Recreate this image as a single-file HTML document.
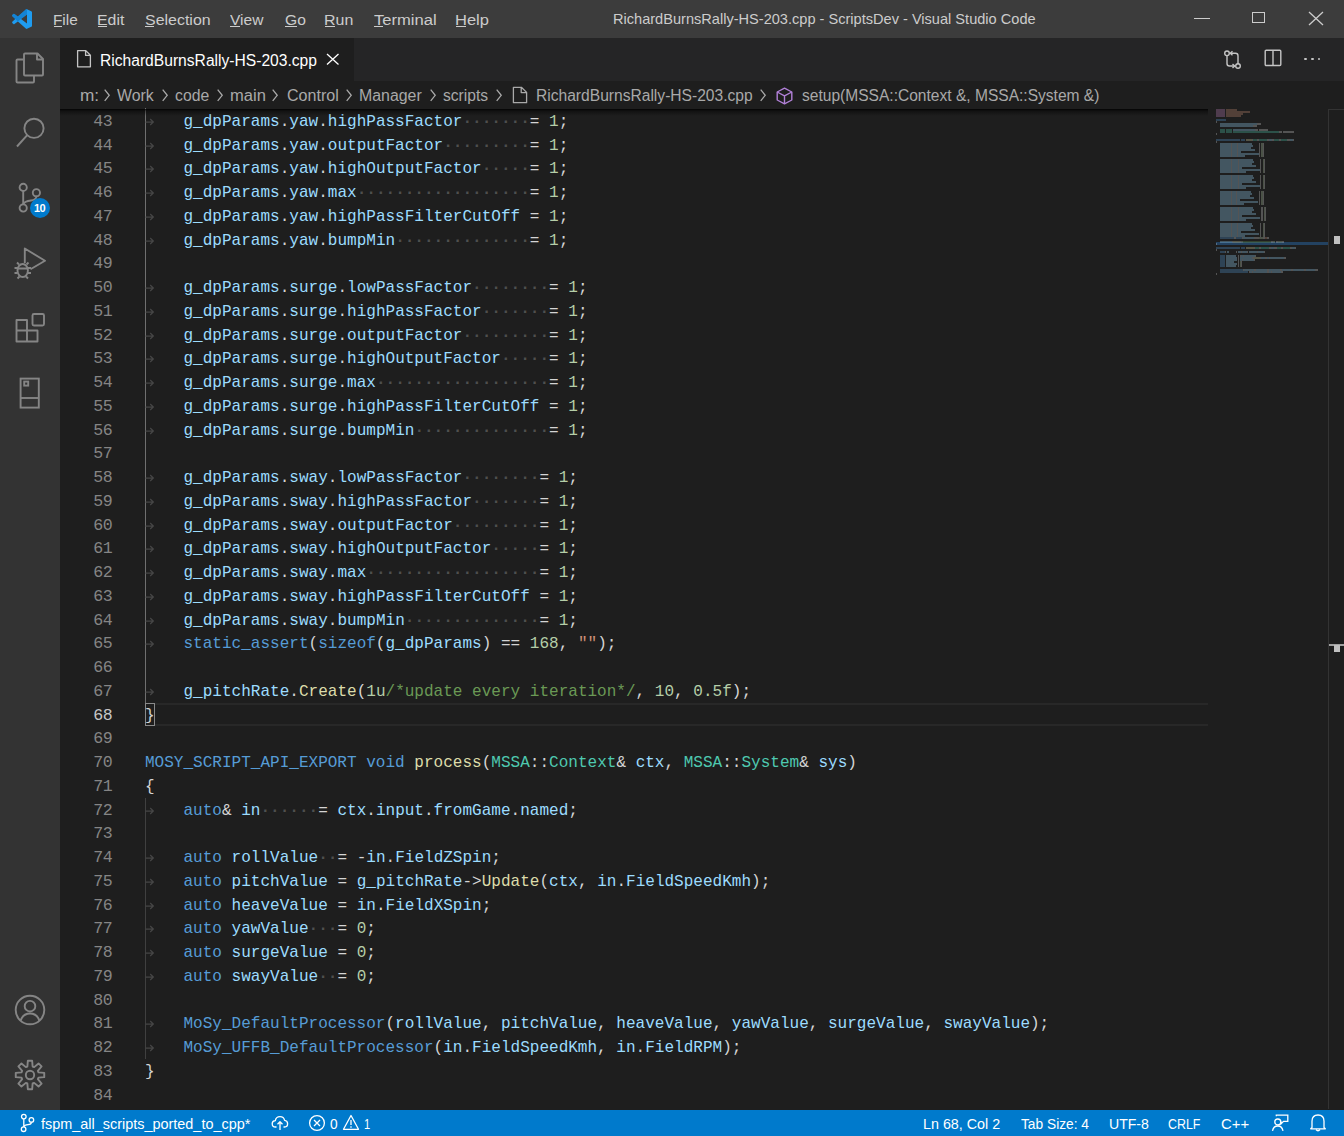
<!DOCTYPE html><html><head><meta charset="utf-8"><style>
*{margin:0;padding:0;box-sizing:border-box}
html,body{width:1344px;height:1136px;overflow:hidden;background:#1e1e1e}
body{position:relative;font-family:"Liberation Sans",sans-serif}
.abs{position:absolute}
svg.abs{overflow:visible}
#title{left:0;top:0;width:1344px;height:37.9px;background:#3c3c3c}
#act{left:0;top:37.5px;width:60px;height:1072px;background:#333333}
#tabs{left:60px;top:37.5px;width:1284px;height:43.75px;background:#252526}
#tab{left:60px;top:37.5px;width:294px;height:43.75px;background:#1e1e1e}
#status{left:0;top:1109.5px;width:1344px;height:26.5px;background:#007acc}
.ln{position:absolute;left:145.2px;height:23.75px;line-height:23.75px;font-family:"Liberation Mono",monospace;font-size:16.6px;white-space:pre;color:#d4d4d4;transform:scaleX(0.9659);transform-origin:0 0}
.num{position:absolute;left:60px;width:52.5px;text-align:right;height:23.75px;line-height:23.75px;font-family:"Liberation Mono",monospace;font-size:16.6px;white-space:pre;letter-spacing:-0.34px}
.ws{color:rgba(227,228,226,0.26);font-weight:bold}
.t{position:absolute;white-space:pre;transform-origin:0 0;font-family:"Liberation Sans",sans-serif}
</style></head><body>
<div id="title" class="abs"></div>
<div id="act" class="abs"></div>
<div id="tabs" class="abs"></div>
<div id="tab" class="abs"></div>
<div id="status" class="abs"></div>
<div class="abs" style="left:145px;top:702.80px;width:1063px;height:23.6px;border-top:2.5px solid #282828;border-bottom:2.5px solid #282828"></div>
<div class="abs" style="left:145px;top:108.25px;width:1.25px;height:594.75px;background:#707070"></div><div class="abs" style="left:145px;top:798.00px;width:1.25px;height:261.25px;background:#404040"></div>
<svg class="abs" style="left:145px;top:116.75px" width="11" height="10" viewBox="0 0 11 10"><path d="M0.5 5H8.3M5.2 2L8.3 5L5.2 8" fill="none" stroke="#464646" stroke-width="1.25"/></svg><svg class="abs" style="left:145px;top:140.5px" width="11" height="10" viewBox="0 0 11 10"><path d="M0.5 5H8.3M5.2 2L8.3 5L5.2 8" fill="none" stroke="#464646" stroke-width="1.25"/></svg><svg class="abs" style="left:145px;top:164.25px" width="11" height="10" viewBox="0 0 11 10"><path d="M0.5 5H8.3M5.2 2L8.3 5L5.2 8" fill="none" stroke="#464646" stroke-width="1.25"/></svg><svg class="abs" style="left:145px;top:188.0px" width="11" height="10" viewBox="0 0 11 10"><path d="M0.5 5H8.3M5.2 2L8.3 5L5.2 8" fill="none" stroke="#464646" stroke-width="1.25"/></svg><svg class="abs" style="left:145px;top:211.75px" width="11" height="10" viewBox="0 0 11 10"><path d="M0.5 5H8.3M5.2 2L8.3 5L5.2 8" fill="none" stroke="#464646" stroke-width="1.25"/></svg><svg class="abs" style="left:145px;top:235.5px" width="11" height="10" viewBox="0 0 11 10"><path d="M0.5 5H8.3M5.2 2L8.3 5L5.2 8" fill="none" stroke="#464646" stroke-width="1.25"/></svg><svg class="abs" style="left:145px;top:283.0px" width="11" height="10" viewBox="0 0 11 10"><path d="M0.5 5H8.3M5.2 2L8.3 5L5.2 8" fill="none" stroke="#464646" stroke-width="1.25"/></svg><svg class="abs" style="left:145px;top:306.75px" width="11" height="10" viewBox="0 0 11 10"><path d="M0.5 5H8.3M5.2 2L8.3 5L5.2 8" fill="none" stroke="#464646" stroke-width="1.25"/></svg><svg class="abs" style="left:145px;top:330.5px" width="11" height="10" viewBox="0 0 11 10"><path d="M0.5 5H8.3M5.2 2L8.3 5L5.2 8" fill="none" stroke="#464646" stroke-width="1.25"/></svg><svg class="abs" style="left:145px;top:354.25px" width="11" height="10" viewBox="0 0 11 10"><path d="M0.5 5H8.3M5.2 2L8.3 5L5.2 8" fill="none" stroke="#464646" stroke-width="1.25"/></svg><svg class="abs" style="left:145px;top:378.0px" width="11" height="10" viewBox="0 0 11 10"><path d="M0.5 5H8.3M5.2 2L8.3 5L5.2 8" fill="none" stroke="#464646" stroke-width="1.25"/></svg><svg class="abs" style="left:145px;top:401.75px" width="11" height="10" viewBox="0 0 11 10"><path d="M0.5 5H8.3M5.2 2L8.3 5L5.2 8" fill="none" stroke="#464646" stroke-width="1.25"/></svg><svg class="abs" style="left:145px;top:425.5px" width="11" height="10" viewBox="0 0 11 10"><path d="M0.5 5H8.3M5.2 2L8.3 5L5.2 8" fill="none" stroke="#464646" stroke-width="1.25"/></svg><svg class="abs" style="left:145px;top:473.0px" width="11" height="10" viewBox="0 0 11 10"><path d="M0.5 5H8.3M5.2 2L8.3 5L5.2 8" fill="none" stroke="#464646" stroke-width="1.25"/></svg><svg class="abs" style="left:145px;top:496.75px" width="11" height="10" viewBox="0 0 11 10"><path d="M0.5 5H8.3M5.2 2L8.3 5L5.2 8" fill="none" stroke="#464646" stroke-width="1.25"/></svg><svg class="abs" style="left:145px;top:520.5px" width="11" height="10" viewBox="0 0 11 10"><path d="M0.5 5H8.3M5.2 2L8.3 5L5.2 8" fill="none" stroke="#464646" stroke-width="1.25"/></svg><svg class="abs" style="left:145px;top:544.25px" width="11" height="10" viewBox="0 0 11 10"><path d="M0.5 5H8.3M5.2 2L8.3 5L5.2 8" fill="none" stroke="#464646" stroke-width="1.25"/></svg><svg class="abs" style="left:145px;top:568.0px" width="11" height="10" viewBox="0 0 11 10"><path d="M0.5 5H8.3M5.2 2L8.3 5L5.2 8" fill="none" stroke="#464646" stroke-width="1.25"/></svg><svg class="abs" style="left:145px;top:591.75px" width="11" height="10" viewBox="0 0 11 10"><path d="M0.5 5H8.3M5.2 2L8.3 5L5.2 8" fill="none" stroke="#464646" stroke-width="1.25"/></svg><svg class="abs" style="left:145px;top:615.5px" width="11" height="10" viewBox="0 0 11 10"><path d="M0.5 5H8.3M5.2 2L8.3 5L5.2 8" fill="none" stroke="#464646" stroke-width="1.25"/></svg><svg class="abs" style="left:145px;top:639.25px" width="11" height="10" viewBox="0 0 11 10"><path d="M0.5 5H8.3M5.2 2L8.3 5L5.2 8" fill="none" stroke="#464646" stroke-width="1.25"/></svg><svg class="abs" style="left:145px;top:686.75px" width="11" height="10" viewBox="0 0 11 10"><path d="M0.5 5H8.3M5.2 2L8.3 5L5.2 8" fill="none" stroke="#464646" stroke-width="1.25"/></svg><svg class="abs" style="left:145px;top:805.5px" width="11" height="10" viewBox="0 0 11 10"><path d="M0.5 5H8.3M5.2 2L8.3 5L5.2 8" fill="none" stroke="#464646" stroke-width="1.25"/></svg><svg class="abs" style="left:145px;top:853.0px" width="11" height="10" viewBox="0 0 11 10"><path d="M0.5 5H8.3M5.2 2L8.3 5L5.2 8" fill="none" stroke="#464646" stroke-width="1.25"/></svg><svg class="abs" style="left:145px;top:876.75px" width="11" height="10" viewBox="0 0 11 10"><path d="M0.5 5H8.3M5.2 2L8.3 5L5.2 8" fill="none" stroke="#464646" stroke-width="1.25"/></svg><svg class="abs" style="left:145px;top:900.5px" width="11" height="10" viewBox="0 0 11 10"><path d="M0.5 5H8.3M5.2 2L8.3 5L5.2 8" fill="none" stroke="#464646" stroke-width="1.25"/></svg><svg class="abs" style="left:145px;top:924.25px" width="11" height="10" viewBox="0 0 11 10"><path d="M0.5 5H8.3M5.2 2L8.3 5L5.2 8" fill="none" stroke="#464646" stroke-width="1.25"/></svg><svg class="abs" style="left:145px;top:948.0px" width="11" height="10" viewBox="0 0 11 10"><path d="M0.5 5H8.3M5.2 2L8.3 5L5.2 8" fill="none" stroke="#464646" stroke-width="1.25"/></svg><svg class="abs" style="left:145px;top:971.75px" width="11" height="10" viewBox="0 0 11 10"><path d="M0.5 5H8.3M5.2 2L8.3 5L5.2 8" fill="none" stroke="#464646" stroke-width="1.25"/></svg><svg class="abs" style="left:145px;top:1019.25px" width="11" height="10" viewBox="0 0 11 10"><path d="M0.5 5H8.3M5.2 2L8.3 5L5.2 8" fill="none" stroke="#464646" stroke-width="1.25"/></svg><svg class="abs" style="left:145px;top:1043.0px" width="11" height="10" viewBox="0 0 11 10"><path d="M0.5 5H8.3M5.2 2L8.3 5L5.2 8" fill="none" stroke="#464646" stroke-width="1.25"/></svg>
<div class="abs" style="left:145px;top:702.90px;width:10px;height:23.2px;border:1.2px solid #8a8a8a;background:#1e1e1e"></div>
<div class="ln" style="top:109.80px">    <span style="color:#9cdcfe">g_dpParams</span><span style="color:#d4d4d4">.</span><span style="color:#9cdcfe">yaw</span><span style="color:#d4d4d4">.</span><span style="color:#9cdcfe">highPassFactor</span><span class="ws">·······</span><span style="color:#d4d4d4">= </span><span style="color:#b5cea8">1</span><span style="color:#d4d4d4">;</span></div>
<div class="num" style="top:109.80px;color:#858585">43</div>
<div class="ln" style="top:133.55px">    <span style="color:#9cdcfe">g_dpParams</span><span style="color:#d4d4d4">.</span><span style="color:#9cdcfe">yaw</span><span style="color:#d4d4d4">.</span><span style="color:#9cdcfe">outputFactor</span><span class="ws">·········</span><span style="color:#d4d4d4">= </span><span style="color:#b5cea8">1</span><span style="color:#d4d4d4">;</span></div>
<div class="num" style="top:133.55px;color:#858585">44</div>
<div class="ln" style="top:157.30px">    <span style="color:#9cdcfe">g_dpParams</span><span style="color:#d4d4d4">.</span><span style="color:#9cdcfe">yaw</span><span style="color:#d4d4d4">.</span><span style="color:#9cdcfe">highOutputFactor</span><span class="ws">·····</span><span style="color:#d4d4d4">= </span><span style="color:#b5cea8">1</span><span style="color:#d4d4d4">;</span></div>
<div class="num" style="top:157.30px;color:#858585">45</div>
<div class="ln" style="top:181.05px">    <span style="color:#9cdcfe">g_dpParams</span><span style="color:#d4d4d4">.</span><span style="color:#9cdcfe">yaw</span><span style="color:#d4d4d4">.</span><span style="color:#9cdcfe">max</span><span class="ws">··················</span><span style="color:#d4d4d4">= </span><span style="color:#b5cea8">1</span><span style="color:#d4d4d4">;</span></div>
<div class="num" style="top:181.05px;color:#858585">46</div>
<div class="ln" style="top:204.80px">    <span style="color:#9cdcfe">g_dpParams</span><span style="color:#d4d4d4">.</span><span style="color:#9cdcfe">yaw</span><span style="color:#d4d4d4">.</span><span style="color:#9cdcfe">highPassFilterCutOff</span> <span style="color:#d4d4d4">= </span><span style="color:#b5cea8">1</span><span style="color:#d4d4d4">;</span></div>
<div class="num" style="top:204.80px;color:#858585">47</div>
<div class="ln" style="top:228.55px">    <span style="color:#9cdcfe">g_dpParams</span><span style="color:#d4d4d4">.</span><span style="color:#9cdcfe">yaw</span><span style="color:#d4d4d4">.</span><span style="color:#9cdcfe">bumpMin</span><span class="ws">··············</span><span style="color:#d4d4d4">= </span><span style="color:#b5cea8">1</span><span style="color:#d4d4d4">;</span></div>
<div class="num" style="top:228.55px;color:#858585">48</div>
<div class="ln" style="top:252.30px"></div>
<div class="num" style="top:252.30px;color:#858585">49</div>
<div class="ln" style="top:276.05px">    <span style="color:#9cdcfe">g_dpParams</span><span style="color:#d4d4d4">.</span><span style="color:#9cdcfe">surge</span><span style="color:#d4d4d4">.</span><span style="color:#9cdcfe">lowPassFactor</span><span class="ws">········</span><span style="color:#d4d4d4">= </span><span style="color:#b5cea8">1</span><span style="color:#d4d4d4">;</span></div>
<div class="num" style="top:276.05px;color:#858585">50</div>
<div class="ln" style="top:299.80px">    <span style="color:#9cdcfe">g_dpParams</span><span style="color:#d4d4d4">.</span><span style="color:#9cdcfe">surge</span><span style="color:#d4d4d4">.</span><span style="color:#9cdcfe">highPassFactor</span><span class="ws">·······</span><span style="color:#d4d4d4">= </span><span style="color:#b5cea8">1</span><span style="color:#d4d4d4">;</span></div>
<div class="num" style="top:299.80px;color:#858585">51</div>
<div class="ln" style="top:323.55px">    <span style="color:#9cdcfe">g_dpParams</span><span style="color:#d4d4d4">.</span><span style="color:#9cdcfe">surge</span><span style="color:#d4d4d4">.</span><span style="color:#9cdcfe">outputFactor</span><span class="ws">·········</span><span style="color:#d4d4d4">= </span><span style="color:#b5cea8">1</span><span style="color:#d4d4d4">;</span></div>
<div class="num" style="top:323.55px;color:#858585">52</div>
<div class="ln" style="top:347.30px">    <span style="color:#9cdcfe">g_dpParams</span><span style="color:#d4d4d4">.</span><span style="color:#9cdcfe">surge</span><span style="color:#d4d4d4">.</span><span style="color:#9cdcfe">highOutputFactor</span><span class="ws">·····</span><span style="color:#d4d4d4">= </span><span style="color:#b5cea8">1</span><span style="color:#d4d4d4">;</span></div>
<div class="num" style="top:347.30px;color:#858585">53</div>
<div class="ln" style="top:371.05px">    <span style="color:#9cdcfe">g_dpParams</span><span style="color:#d4d4d4">.</span><span style="color:#9cdcfe">surge</span><span style="color:#d4d4d4">.</span><span style="color:#9cdcfe">max</span><span class="ws">··················</span><span style="color:#d4d4d4">= </span><span style="color:#b5cea8">1</span><span style="color:#d4d4d4">;</span></div>
<div class="num" style="top:371.05px;color:#858585">54</div>
<div class="ln" style="top:394.80px">    <span style="color:#9cdcfe">g_dpParams</span><span style="color:#d4d4d4">.</span><span style="color:#9cdcfe">surge</span><span style="color:#d4d4d4">.</span><span style="color:#9cdcfe">highPassFilterCutOff</span> <span style="color:#d4d4d4">= </span><span style="color:#b5cea8">1</span><span style="color:#d4d4d4">;</span></div>
<div class="num" style="top:394.80px;color:#858585">55</div>
<div class="ln" style="top:418.55px">    <span style="color:#9cdcfe">g_dpParams</span><span style="color:#d4d4d4">.</span><span style="color:#9cdcfe">surge</span><span style="color:#d4d4d4">.</span><span style="color:#9cdcfe">bumpMin</span><span class="ws">··············</span><span style="color:#d4d4d4">= </span><span style="color:#b5cea8">1</span><span style="color:#d4d4d4">;</span></div>
<div class="num" style="top:418.55px;color:#858585">56</div>
<div class="ln" style="top:442.30px"></div>
<div class="num" style="top:442.30px;color:#858585">57</div>
<div class="ln" style="top:466.05px">    <span style="color:#9cdcfe">g_dpParams</span><span style="color:#d4d4d4">.</span><span style="color:#9cdcfe">sway</span><span style="color:#d4d4d4">.</span><span style="color:#9cdcfe">lowPassFactor</span><span class="ws">········</span><span style="color:#d4d4d4">= </span><span style="color:#b5cea8">1</span><span style="color:#d4d4d4">;</span></div>
<div class="num" style="top:466.05px;color:#858585">58</div>
<div class="ln" style="top:489.80px">    <span style="color:#9cdcfe">g_dpParams</span><span style="color:#d4d4d4">.</span><span style="color:#9cdcfe">sway</span><span style="color:#d4d4d4">.</span><span style="color:#9cdcfe">highPassFactor</span><span class="ws">·······</span><span style="color:#d4d4d4">= </span><span style="color:#b5cea8">1</span><span style="color:#d4d4d4">;</span></div>
<div class="num" style="top:489.80px;color:#858585">59</div>
<div class="ln" style="top:513.55px">    <span style="color:#9cdcfe">g_dpParams</span><span style="color:#d4d4d4">.</span><span style="color:#9cdcfe">sway</span><span style="color:#d4d4d4">.</span><span style="color:#9cdcfe">outputFactor</span><span class="ws">·········</span><span style="color:#d4d4d4">= </span><span style="color:#b5cea8">1</span><span style="color:#d4d4d4">;</span></div>
<div class="num" style="top:513.55px;color:#858585">60</div>
<div class="ln" style="top:537.30px">    <span style="color:#9cdcfe">g_dpParams</span><span style="color:#d4d4d4">.</span><span style="color:#9cdcfe">sway</span><span style="color:#d4d4d4">.</span><span style="color:#9cdcfe">highOutputFactor</span><span class="ws">·····</span><span style="color:#d4d4d4">= </span><span style="color:#b5cea8">1</span><span style="color:#d4d4d4">;</span></div>
<div class="num" style="top:537.30px;color:#858585">61</div>
<div class="ln" style="top:561.05px">    <span style="color:#9cdcfe">g_dpParams</span><span style="color:#d4d4d4">.</span><span style="color:#9cdcfe">sway</span><span style="color:#d4d4d4">.</span><span style="color:#9cdcfe">max</span><span class="ws">··················</span><span style="color:#d4d4d4">= </span><span style="color:#b5cea8">1</span><span style="color:#d4d4d4">;</span></div>
<div class="num" style="top:561.05px;color:#858585">62</div>
<div class="ln" style="top:584.80px">    <span style="color:#9cdcfe">g_dpParams</span><span style="color:#d4d4d4">.</span><span style="color:#9cdcfe">sway</span><span style="color:#d4d4d4">.</span><span style="color:#9cdcfe">highPassFilterCutOff</span> <span style="color:#d4d4d4">= </span><span style="color:#b5cea8">1</span><span style="color:#d4d4d4">;</span></div>
<div class="num" style="top:584.80px;color:#858585">63</div>
<div class="ln" style="top:608.55px">    <span style="color:#9cdcfe">g_dpParams</span><span style="color:#d4d4d4">.</span><span style="color:#9cdcfe">sway</span><span style="color:#d4d4d4">.</span><span style="color:#9cdcfe">bumpMin</span><span class="ws">··············</span><span style="color:#d4d4d4">= </span><span style="color:#b5cea8">1</span><span style="color:#d4d4d4">;</span></div>
<div class="num" style="top:608.55px;color:#858585">64</div>
<div class="ln" style="top:632.30px">    <span style="color:#569cd6">static_assert</span><span style="color:#d4d4d4">(</span><span style="color:#569cd6">sizeof</span><span style="color:#d4d4d4">(</span><span style="color:#9cdcfe">g_dpParams</span><span style="color:#d4d4d4">) == </span><span style="color:#b5cea8">168</span><span style="color:#d4d4d4">, </span><span style="color:#ce9178">&quot;&quot;</span><span style="color:#d4d4d4">);</span></div>
<div class="num" style="top:632.30px;color:#858585">65</div>
<div class="ln" style="top:656.05px"></div>
<div class="num" style="top:656.05px;color:#858585">66</div>
<div class="ln" style="top:679.80px">    <span style="color:#9cdcfe">g_pitchRate</span><span style="color:#d4d4d4">.</span><span style="color:#dcdcaa">Create</span><span style="color:#d4d4d4">(</span><span style="color:#b5cea8">1u</span><span style="color:#6a9955">/*update every iteration*/</span><span style="color:#d4d4d4">, </span><span style="color:#b5cea8">10</span><span style="color:#d4d4d4">, </span><span style="color:#b5cea8">0.5f</span><span style="color:#d4d4d4">);</span></div>
<div class="num" style="top:679.80px;color:#858585">67</div>
<div class="ln" style="top:703.55px"><span class="bm" style="color:#d4d4d4">}</span></div>
<div class="num" style="top:703.55px;color:#c6c6c6">68</div>
<div class="ln" style="top:727.30px"></div>
<div class="num" style="top:727.30px;color:#858585">69</div>
<div class="ln" style="top:751.05px"><span style="color:#569cd6">MOSY_SCRIPT_API_EXPORT</span><span style="color:#d4d4d4"> </span><span style="color:#569cd6">void</span><span style="color:#d4d4d4"> </span><span style="color:#dcdcaa">process</span><span style="color:#d4d4d4">(</span><span style="color:#4ec9b0">MSSA</span><span style="color:#d4d4d4">::</span><span style="color:#4ec9b0">Context</span><span style="color:#d4d4d4">&amp; </span><span style="color:#9cdcfe">ctx</span><span style="color:#d4d4d4">, </span><span style="color:#4ec9b0">MSSA</span><span style="color:#d4d4d4">::</span><span style="color:#4ec9b0">System</span><span style="color:#d4d4d4">&amp; </span><span style="color:#9cdcfe">sys</span><span style="color:#d4d4d4">)</span></div>
<div class="num" style="top:751.05px;color:#858585">70</div>
<div class="ln" style="top:774.80px"><span style="color:#d4d4d4">{</span></div>
<div class="num" style="top:774.80px;color:#858585">71</div>
<div class="ln" style="top:798.55px">    <span style="color:#569cd6">auto</span><span style="color:#d4d4d4">&amp; </span><span style="color:#9cdcfe">in</span><span class="ws">······</span><span style="color:#d4d4d4">= </span><span style="color:#9cdcfe">ctx</span><span style="color:#d4d4d4">.</span><span style="color:#9cdcfe">input</span><span style="color:#d4d4d4">.</span><span style="color:#9cdcfe">fromGame</span><span style="color:#d4d4d4">.</span><span style="color:#9cdcfe">named</span><span style="color:#d4d4d4">;</span></div>
<div class="num" style="top:798.55px;color:#858585">72</div>
<div class="ln" style="top:822.30px"></div>
<div class="num" style="top:822.30px;color:#858585">73</div>
<div class="ln" style="top:846.05px">    <span style="color:#569cd6">auto</span><span style="color:#d4d4d4"> </span><span style="color:#9cdcfe">rollValue</span><span class="ws">··</span><span style="color:#d4d4d4">= </span><span style="color:#d4d4d4">-</span><span style="color:#9cdcfe">in</span><span style="color:#d4d4d4">.</span><span style="color:#9cdcfe">FieldZSpin</span><span style="color:#d4d4d4">;</span></div>
<div class="num" style="top:846.05px;color:#858585">74</div>
<div class="ln" style="top:869.80px">    <span style="color:#569cd6">auto</span><span style="color:#d4d4d4"> </span><span style="color:#9cdcfe">pitchValue</span><span style="color:#d4d4d4"> </span><span style="color:#d4d4d4">= </span><span style="color:#9cdcfe">g_pitchRate</span><span style="color:#d4d4d4">-&gt;</span><span style="color:#dcdcaa">Update</span><span style="color:#d4d4d4">(</span><span style="color:#9cdcfe">ctx</span><span style="color:#d4d4d4">, </span><span style="color:#9cdcfe">in</span><span style="color:#d4d4d4">.</span><span style="color:#9cdcfe">FieldSpeedKmh</span><span style="color:#d4d4d4">);</span></div>
<div class="num" style="top:869.80px;color:#858585">75</div>
<div class="ln" style="top:893.55px">    <span style="color:#569cd6">auto</span><span style="color:#d4d4d4"> </span><span style="color:#9cdcfe">heaveValue</span><span style="color:#d4d4d4"> </span><span style="color:#d4d4d4">= </span><span style="color:#9cdcfe">in</span><span style="color:#d4d4d4">.</span><span style="color:#9cdcfe">FieldXSpin</span><span style="color:#d4d4d4">;</span></div>
<div class="num" style="top:893.55px;color:#858585">76</div>
<div class="ln" style="top:917.30px">    <span style="color:#569cd6">auto</span><span style="color:#d4d4d4"> </span><span style="color:#9cdcfe">yawValue</span><span class="ws">···</span><span style="color:#d4d4d4">= </span><span style="color:#b5cea8">0</span><span style="color:#d4d4d4">;</span></div>
<div class="num" style="top:917.30px;color:#858585">77</div>
<div class="ln" style="top:941.05px">    <span style="color:#569cd6">auto</span><span style="color:#d4d4d4"> </span><span style="color:#9cdcfe">surgeValue</span><span style="color:#d4d4d4"> </span><span style="color:#d4d4d4">= </span><span style="color:#b5cea8">0</span><span style="color:#d4d4d4">;</span></div>
<div class="num" style="top:941.05px;color:#858585">78</div>
<div class="ln" style="top:964.80px">    <span style="color:#569cd6">auto</span><span style="color:#d4d4d4"> </span><span style="color:#9cdcfe">swayValue</span><span class="ws">··</span><span style="color:#d4d4d4">= </span><span style="color:#b5cea8">0</span><span style="color:#d4d4d4">;</span></div>
<div class="num" style="top:964.80px;color:#858585">79</div>
<div class="ln" style="top:988.55px"></div>
<div class="num" style="top:988.55px;color:#858585">80</div>
<div class="ln" style="top:1012.30px">    <span style="color:#569cd6">MoSy_DefaultProcessor</span><span style="color:#d4d4d4">(</span><span style="color:#9cdcfe">rollValue</span><span style="color:#d4d4d4">, </span><span style="color:#9cdcfe">pitchValue</span><span style="color:#d4d4d4">, </span><span style="color:#9cdcfe">heaveValue</span><span style="color:#d4d4d4">, </span><span style="color:#9cdcfe">yawValue</span><span style="color:#d4d4d4">, </span><span style="color:#9cdcfe">surgeValue</span><span style="color:#d4d4d4">, </span><span style="color:#9cdcfe">swayValue</span><span style="color:#d4d4d4">);</span></div>
<div class="num" style="top:1012.30px;color:#858585">81</div>
<div class="ln" style="top:1036.05px">    <span style="color:#569cd6">MoSy_UFFB_DefaultProcessor</span><span style="color:#d4d4d4">(</span><span style="color:#9cdcfe">in</span><span style="color:#d4d4d4">.</span><span style="color:#9cdcfe">FieldSpeedKmh</span><span style="color:#d4d4d4">, </span><span style="color:#9cdcfe">in</span><span style="color:#d4d4d4">.</span><span style="color:#9cdcfe">FieldRPM</span><span style="color:#d4d4d4">);</span></div>
<div class="num" style="top:1036.05px;color:#858585">82</div>
<div class="ln" style="top:1059.80px"><span style="color:#d4d4d4">}</span></div>
<div class="num" style="top:1059.80px;color:#858585">83</div>
<div class="ln" style="top:1083.55px"></div>
<div class="num" style="top:1083.55px;color:#858585">84</div>
<div class="abs" style="left:60px;top:108.5px;width:1148px;height:7px;background:linear-gradient(rgba(0,0,0,0.9) 0%,rgba(0,0,0,0.4) 30%,rgba(0,0,0,0) 100%)"></div>
<div class="abs" style="left:1328px;top:108.75px;width:1.25px;height:1000px;background:#333333"></div><div class="abs" style="left:1328px;top:108.5px;width:16px;height:1.25px;background:#333333"></div><div class="abs" style="left:1333.8px;top:236px;width:6.3px;height:8px;background:#c0c0c0"></div><div class="abs" style="left:1329px;top:643.5px;width:15px;height:2px;background:#a0a0a0"></div><div class="abs" style="left:1334px;top:645px;width:6px;height:7px;background:#c0c0c0"></div>
<div class="abs" style="left:1216.1px;top:242.40px;width:111.9px;height:2.4px;background:#264f78;opacity:0.75"></div><div class="abs" style="left:1216.10px;top:108.80px;width:8.64px;height:1.8px;background:#c586c0;opacity:0.3"></div><div class="abs" style="left:1225.82px;top:108.80px;width:10.80px;height:1.8px;background:#ce9178;opacity:0.3"></div><div class="abs" style="left:1216.10px;top:110.80px;width:8.64px;height:1.8px;background:#c586c0;opacity:0.3"></div><div class="abs" style="left:1225.82px;top:110.80px;width:23.76px;height:1.8px;background:#ce9178;opacity:0.3"></div><div class="abs" style="left:1216.10px;top:112.80px;width:8.64px;height:1.8px;background:#c586c0;opacity:0.3"></div><div class="abs" style="left:1225.82px;top:112.80px;width:17.28px;height:1.8px;background:#ce9178;opacity:0.3"></div><div class="abs" style="left:1216.10px;top:114.80px;width:8.64px;height:1.8px;background:#c586c0;opacity:0.3"></div><div class="abs" style="left:1225.82px;top:114.80px;width:15.12px;height:1.8px;background:#ce9178;opacity:0.3"></div><div class="abs" style="left:1216.10px;top:118.80px;width:9.72px;height:1.8px;background:#569cd6;opacity:0.3"></div><div class="abs" style="left:1216.10px;top:120.80px;width:1.08px;height:1.8px;background:#d4d4d4;opacity:0.3"></div><div class="abs" style="left:1220.42px;top:122.80px;width:36.72px;height:1.8px;background:#9cdcfe;opacity:0.3"></div><div class="abs" style="left:1257.14px;top:122.80px;width:4.32px;height:1.8px;background:#d4d4d4;opacity:0.3"></div><div class="abs" style="left:1220.42px;top:124.80px;width:32.40px;height:1.8px;background:#9cdcfe;opacity:0.3"></div><div class="abs" style="left:1252.82px;top:124.80px;width:4.32px;height:1.8px;background:#d4d4d4;opacity:0.3"></div><div class="abs" style="left:1220.42px;top:128.80px;width:4.32px;height:1.8px;background:#4ec9b0;opacity:0.3"></div><div class="abs" style="left:1225.82px;top:128.80px;width:6.48px;height:1.8px;background:#4ec9b0;opacity:0.3"></div><div class="abs" style="left:1233.38px;top:128.80px;width:21.60px;height:1.8px;background:#9cdcfe;opacity:0.3"></div><div class="abs" style="left:1254.98px;top:128.80px;width:3.24px;height:1.8px;background:#d4d4d4;opacity:0.3"></div><div class="abs" style="left:1259.30px;top:128.80px;width:8.64px;height:1.8px;background:#d4d4d4;opacity:0.3"></div><div class="abs" style="left:1220.42px;top:130.80px;width:4.32px;height:1.8px;background:#4ec9b0;opacity:0.3"></div><div class="abs" style="left:1225.82px;top:130.80px;width:6.48px;height:1.8px;background:#4ec9b0;opacity:0.3"></div><div class="abs" style="left:1233.38px;top:130.80px;width:45.36px;height:1.8px;background:#4ec9b0;opacity:0.3"></div><div class="abs" style="left:1278.74px;top:130.80px;width:3.24px;height:1.8px;background:#d4d4d4;opacity:0.3"></div><div class="abs" style="left:1283.06px;top:130.80px;width:10.80px;height:1.8px;background:#d4d4d4;opacity:0.3"></div><div class="abs" style="left:1216.10px;top:132.80px;width:1.08px;height:1.8px;background:#d4d4d4;opacity:0.3"></div><div class="abs" style="left:1216.10px;top:138.80px;width:23.76px;height:1.8px;background:#569cd6;opacity:0.3"></div><div class="abs" style="left:1240.94px;top:138.80px;width:4.32px;height:1.8px;background:#569cd6;opacity:0.3"></div><div class="abs" style="left:1246.34px;top:138.80px;width:5.40px;height:1.8px;background:#dcdcaa;opacity:0.3"></div><div class="abs" style="left:1251.74px;top:138.80px;width:1.08px;height:1.8px;background:#d4d4d4;opacity:0.3"></div><div class="abs" style="left:1252.82px;top:138.80px;width:4.32px;height:1.8px;background:#4ec9b0;opacity:0.3"></div><div class="abs" style="left:1257.14px;top:138.80px;width:2.16px;height:1.8px;background:#d4d4d4;opacity:0.3"></div><div class="abs" style="left:1259.30px;top:138.80px;width:7.56px;height:1.8px;background:#4ec9b0;opacity:0.3"></div><div class="abs" style="left:1266.86px;top:138.80px;width:2.16px;height:1.8px;background:#d4d4d4;opacity:0.3"></div><div class="abs" style="left:1269.02px;top:138.80px;width:3.24px;height:1.8px;background:#9cdcfe;opacity:0.3"></div><div class="abs" style="left:1272.26px;top:138.80px;width:2.16px;height:1.8px;background:#d4d4d4;opacity:0.3"></div><div class="abs" style="left:1274.42px;top:138.80px;width:4.32px;height:1.8px;background:#4ec9b0;opacity:0.3"></div><div class="abs" style="left:1278.74px;top:138.80px;width:2.16px;height:1.8px;background:#d4d4d4;opacity:0.3"></div><div class="abs" style="left:1280.90px;top:138.80px;width:6.48px;height:1.8px;background:#4ec9b0;opacity:0.3"></div><div class="abs" style="left:1287.38px;top:138.80px;width:2.16px;height:1.8px;background:#d4d4d4;opacity:0.3"></div><div class="abs" style="left:1289.54px;top:138.80px;width:3.24px;height:1.8px;background:#9cdcfe;opacity:0.3"></div><div class="abs" style="left:1292.78px;top:138.80px;width:1.08px;height:1.8px;background:#d4d4d4;opacity:0.3"></div><div class="abs" style="left:1216.10px;top:140.80px;width:1.08px;height:1.8px;background:#d4d4d4;opacity:0.3"></div><div class="abs" style="left:1220.42px;top:142.80px;width:10.80px;height:1.8px;background:#9cdcfe;opacity:0.3"></div><div class="abs" style="left:1231.22px;top:142.80px;width:1.08px;height:1.8px;background:#d4d4d4;opacity:0.3"></div><div class="abs" style="left:1232.30px;top:142.80px;width:4.32px;height:1.8px;background:#9cdcfe;opacity:0.3"></div><div class="abs" style="left:1236.62px;top:142.80px;width:1.08px;height:1.8px;background:#d4d4d4;opacity:0.3"></div><div class="abs" style="left:1237.70px;top:142.80px;width:14.04px;height:1.8px;background:#9cdcfe;opacity:0.3"></div><div class="abs" style="left:1259.30px;top:142.80px;width:1.08px;height:1.8px;background:#d4d4d4;opacity:0.3"></div><div class="abs" style="left:1261.46px;top:142.80px;width:1.08px;height:1.8px;background:#b5cea8;opacity:0.3"></div><div class="abs" style="left:1262.54px;top:142.80px;width:1.08px;height:1.8px;background:#d4d4d4;opacity:0.3"></div><div class="abs" style="left:1220.42px;top:144.80px;width:10.80px;height:1.8px;background:#9cdcfe;opacity:0.3"></div><div class="abs" style="left:1231.22px;top:144.80px;width:1.08px;height:1.8px;background:#d4d4d4;opacity:0.3"></div><div class="abs" style="left:1232.30px;top:144.80px;width:4.32px;height:1.8px;background:#9cdcfe;opacity:0.3"></div><div class="abs" style="left:1236.62px;top:144.80px;width:1.08px;height:1.8px;background:#d4d4d4;opacity:0.3"></div><div class="abs" style="left:1237.70px;top:144.80px;width:15.12px;height:1.8px;background:#9cdcfe;opacity:0.3"></div><div class="abs" style="left:1259.30px;top:144.80px;width:1.08px;height:1.8px;background:#d4d4d4;opacity:0.3"></div><div class="abs" style="left:1261.46px;top:144.80px;width:1.08px;height:1.8px;background:#b5cea8;opacity:0.3"></div><div class="abs" style="left:1262.54px;top:144.80px;width:1.08px;height:1.8px;background:#d4d4d4;opacity:0.3"></div><div class="abs" style="left:1220.42px;top:146.80px;width:10.80px;height:1.8px;background:#9cdcfe;opacity:0.3"></div><div class="abs" style="left:1231.22px;top:146.80px;width:1.08px;height:1.8px;background:#d4d4d4;opacity:0.3"></div><div class="abs" style="left:1232.30px;top:146.80px;width:4.32px;height:1.8px;background:#9cdcfe;opacity:0.3"></div><div class="abs" style="left:1236.62px;top:146.80px;width:1.08px;height:1.8px;background:#d4d4d4;opacity:0.3"></div><div class="abs" style="left:1237.70px;top:146.80px;width:12.96px;height:1.8px;background:#9cdcfe;opacity:0.3"></div><div class="abs" style="left:1259.30px;top:146.80px;width:1.08px;height:1.8px;background:#d4d4d4;opacity:0.3"></div><div class="abs" style="left:1261.46px;top:146.80px;width:1.08px;height:1.8px;background:#b5cea8;opacity:0.3"></div><div class="abs" style="left:1262.54px;top:146.80px;width:1.08px;height:1.8px;background:#d4d4d4;opacity:0.3"></div><div class="abs" style="left:1220.42px;top:148.80px;width:10.80px;height:1.8px;background:#9cdcfe;opacity:0.3"></div><div class="abs" style="left:1231.22px;top:148.80px;width:1.08px;height:1.8px;background:#d4d4d4;opacity:0.3"></div><div class="abs" style="left:1232.30px;top:148.80px;width:4.32px;height:1.8px;background:#9cdcfe;opacity:0.3"></div><div class="abs" style="left:1236.62px;top:148.80px;width:1.08px;height:1.8px;background:#d4d4d4;opacity:0.3"></div><div class="abs" style="left:1237.70px;top:148.80px;width:17.28px;height:1.8px;background:#9cdcfe;opacity:0.3"></div><div class="abs" style="left:1259.30px;top:148.80px;width:1.08px;height:1.8px;background:#d4d4d4;opacity:0.3"></div><div class="abs" style="left:1261.46px;top:148.80px;width:1.08px;height:1.8px;background:#b5cea8;opacity:0.3"></div><div class="abs" style="left:1262.54px;top:148.80px;width:1.08px;height:1.8px;background:#d4d4d4;opacity:0.3"></div><div class="abs" style="left:1220.42px;top:150.80px;width:10.80px;height:1.8px;background:#9cdcfe;opacity:0.3"></div><div class="abs" style="left:1231.22px;top:150.80px;width:1.08px;height:1.8px;background:#d4d4d4;opacity:0.3"></div><div class="abs" style="left:1232.30px;top:150.80px;width:4.32px;height:1.8px;background:#9cdcfe;opacity:0.3"></div><div class="abs" style="left:1236.62px;top:150.80px;width:1.08px;height:1.8px;background:#d4d4d4;opacity:0.3"></div><div class="abs" style="left:1237.70px;top:150.80px;width:3.24px;height:1.8px;background:#9cdcfe;opacity:0.3"></div><div class="abs" style="left:1259.30px;top:150.80px;width:1.08px;height:1.8px;background:#d4d4d4;opacity:0.3"></div><div class="abs" style="left:1261.46px;top:150.80px;width:1.08px;height:1.8px;background:#b5cea8;opacity:0.3"></div><div class="abs" style="left:1262.54px;top:150.80px;width:1.08px;height:1.8px;background:#d4d4d4;opacity:0.3"></div><div class="abs" style="left:1220.42px;top:152.80px;width:10.80px;height:1.8px;background:#9cdcfe;opacity:0.3"></div><div class="abs" style="left:1231.22px;top:152.80px;width:1.08px;height:1.8px;background:#d4d4d4;opacity:0.3"></div><div class="abs" style="left:1232.30px;top:152.80px;width:4.32px;height:1.8px;background:#9cdcfe;opacity:0.3"></div><div class="abs" style="left:1236.62px;top:152.80px;width:1.08px;height:1.8px;background:#d4d4d4;opacity:0.3"></div><div class="abs" style="left:1237.70px;top:152.80px;width:21.60px;height:1.8px;background:#9cdcfe;opacity:0.3"></div><div class="abs" style="left:1259.30px;top:152.80px;width:1.08px;height:1.8px;background:#d4d4d4;opacity:0.3"></div><div class="abs" style="left:1261.46px;top:152.80px;width:1.08px;height:1.8px;background:#b5cea8;opacity:0.3"></div><div class="abs" style="left:1262.54px;top:152.80px;width:1.08px;height:1.8px;background:#d4d4d4;opacity:0.3"></div><div class="abs" style="left:1220.42px;top:154.80px;width:10.80px;height:1.8px;background:#9cdcfe;opacity:0.3"></div><div class="abs" style="left:1231.22px;top:154.80px;width:1.08px;height:1.8px;background:#d4d4d4;opacity:0.3"></div><div class="abs" style="left:1232.30px;top:154.80px;width:4.32px;height:1.8px;background:#9cdcfe;opacity:0.3"></div><div class="abs" style="left:1236.62px;top:154.80px;width:1.08px;height:1.8px;background:#d4d4d4;opacity:0.3"></div><div class="abs" style="left:1237.70px;top:154.80px;width:7.56px;height:1.8px;background:#9cdcfe;opacity:0.3"></div><div class="abs" style="left:1259.30px;top:154.80px;width:1.08px;height:1.8px;background:#d4d4d4;opacity:0.3"></div><div class="abs" style="left:1261.46px;top:154.80px;width:1.08px;height:1.8px;background:#b5cea8;opacity:0.3"></div><div class="abs" style="left:1262.54px;top:154.80px;width:1.08px;height:1.8px;background:#d4d4d4;opacity:0.3"></div><div class="abs" style="left:1220.42px;top:158.80px;width:10.80px;height:1.8px;background:#9cdcfe;opacity:0.3"></div><div class="abs" style="left:1231.22px;top:158.80px;width:1.08px;height:1.8px;background:#d4d4d4;opacity:0.3"></div><div class="abs" style="left:1232.30px;top:158.80px;width:5.40px;height:1.8px;background:#9cdcfe;opacity:0.3"></div><div class="abs" style="left:1237.70px;top:158.80px;width:1.08px;height:1.8px;background:#d4d4d4;opacity:0.3"></div><div class="abs" style="left:1238.78px;top:158.80px;width:14.04px;height:1.8px;background:#9cdcfe;opacity:0.3"></div><div class="abs" style="left:1260.38px;top:158.80px;width:1.08px;height:1.8px;background:#d4d4d4;opacity:0.3"></div><div class="abs" style="left:1262.54px;top:158.80px;width:1.08px;height:1.8px;background:#b5cea8;opacity:0.3"></div><div class="abs" style="left:1263.62px;top:158.80px;width:1.08px;height:1.8px;background:#d4d4d4;opacity:0.3"></div><div class="abs" style="left:1220.42px;top:160.80px;width:10.80px;height:1.8px;background:#9cdcfe;opacity:0.3"></div><div class="abs" style="left:1231.22px;top:160.80px;width:1.08px;height:1.8px;background:#d4d4d4;opacity:0.3"></div><div class="abs" style="left:1232.30px;top:160.80px;width:5.40px;height:1.8px;background:#9cdcfe;opacity:0.3"></div><div class="abs" style="left:1237.70px;top:160.80px;width:1.08px;height:1.8px;background:#d4d4d4;opacity:0.3"></div><div class="abs" style="left:1238.78px;top:160.80px;width:15.12px;height:1.8px;background:#9cdcfe;opacity:0.3"></div><div class="abs" style="left:1260.38px;top:160.80px;width:1.08px;height:1.8px;background:#d4d4d4;opacity:0.3"></div><div class="abs" style="left:1262.54px;top:160.80px;width:1.08px;height:1.8px;background:#b5cea8;opacity:0.3"></div><div class="abs" style="left:1263.62px;top:160.80px;width:1.08px;height:1.8px;background:#d4d4d4;opacity:0.3"></div><div class="abs" style="left:1220.42px;top:162.80px;width:10.80px;height:1.8px;background:#9cdcfe;opacity:0.3"></div><div class="abs" style="left:1231.22px;top:162.80px;width:1.08px;height:1.8px;background:#d4d4d4;opacity:0.3"></div><div class="abs" style="left:1232.30px;top:162.80px;width:5.40px;height:1.8px;background:#9cdcfe;opacity:0.3"></div><div class="abs" style="left:1237.70px;top:162.80px;width:1.08px;height:1.8px;background:#d4d4d4;opacity:0.3"></div><div class="abs" style="left:1238.78px;top:162.80px;width:12.96px;height:1.8px;background:#9cdcfe;opacity:0.3"></div><div class="abs" style="left:1260.38px;top:162.80px;width:1.08px;height:1.8px;background:#d4d4d4;opacity:0.3"></div><div class="abs" style="left:1262.54px;top:162.80px;width:1.08px;height:1.8px;background:#b5cea8;opacity:0.3"></div><div class="abs" style="left:1263.62px;top:162.80px;width:1.08px;height:1.8px;background:#d4d4d4;opacity:0.3"></div><div class="abs" style="left:1220.42px;top:164.80px;width:10.80px;height:1.8px;background:#9cdcfe;opacity:0.3"></div><div class="abs" style="left:1231.22px;top:164.80px;width:1.08px;height:1.8px;background:#d4d4d4;opacity:0.3"></div><div class="abs" style="left:1232.30px;top:164.80px;width:5.40px;height:1.8px;background:#9cdcfe;opacity:0.3"></div><div class="abs" style="left:1237.70px;top:164.80px;width:1.08px;height:1.8px;background:#d4d4d4;opacity:0.3"></div><div class="abs" style="left:1238.78px;top:164.80px;width:17.28px;height:1.8px;background:#9cdcfe;opacity:0.3"></div><div class="abs" style="left:1260.38px;top:164.80px;width:1.08px;height:1.8px;background:#d4d4d4;opacity:0.3"></div><div class="abs" style="left:1262.54px;top:164.80px;width:1.08px;height:1.8px;background:#b5cea8;opacity:0.3"></div><div class="abs" style="left:1263.62px;top:164.80px;width:1.08px;height:1.8px;background:#d4d4d4;opacity:0.3"></div><div class="abs" style="left:1220.42px;top:166.80px;width:10.80px;height:1.8px;background:#9cdcfe;opacity:0.3"></div><div class="abs" style="left:1231.22px;top:166.80px;width:1.08px;height:1.8px;background:#d4d4d4;opacity:0.3"></div><div class="abs" style="left:1232.30px;top:166.80px;width:5.40px;height:1.8px;background:#9cdcfe;opacity:0.3"></div><div class="abs" style="left:1237.70px;top:166.80px;width:1.08px;height:1.8px;background:#d4d4d4;opacity:0.3"></div><div class="abs" style="left:1238.78px;top:166.80px;width:3.24px;height:1.8px;background:#9cdcfe;opacity:0.3"></div><div class="abs" style="left:1260.38px;top:166.80px;width:1.08px;height:1.8px;background:#d4d4d4;opacity:0.3"></div><div class="abs" style="left:1262.54px;top:166.80px;width:1.08px;height:1.8px;background:#b5cea8;opacity:0.3"></div><div class="abs" style="left:1263.62px;top:166.80px;width:1.08px;height:1.8px;background:#d4d4d4;opacity:0.3"></div><div class="abs" style="left:1220.42px;top:168.80px;width:10.80px;height:1.8px;background:#9cdcfe;opacity:0.3"></div><div class="abs" style="left:1231.22px;top:168.80px;width:1.08px;height:1.8px;background:#d4d4d4;opacity:0.3"></div><div class="abs" style="left:1232.30px;top:168.80px;width:5.40px;height:1.8px;background:#9cdcfe;opacity:0.3"></div><div class="abs" style="left:1237.70px;top:168.80px;width:1.08px;height:1.8px;background:#d4d4d4;opacity:0.3"></div><div class="abs" style="left:1238.78px;top:168.80px;width:21.60px;height:1.8px;background:#9cdcfe;opacity:0.3"></div><div class="abs" style="left:1260.38px;top:168.80px;width:1.08px;height:1.8px;background:#d4d4d4;opacity:0.3"></div><div class="abs" style="left:1262.54px;top:168.80px;width:1.08px;height:1.8px;background:#b5cea8;opacity:0.3"></div><div class="abs" style="left:1263.62px;top:168.80px;width:1.08px;height:1.8px;background:#d4d4d4;opacity:0.3"></div><div class="abs" style="left:1220.42px;top:170.80px;width:10.80px;height:1.8px;background:#9cdcfe;opacity:0.3"></div><div class="abs" style="left:1231.22px;top:170.80px;width:1.08px;height:1.8px;background:#d4d4d4;opacity:0.3"></div><div class="abs" style="left:1232.30px;top:170.80px;width:5.40px;height:1.8px;background:#9cdcfe;opacity:0.3"></div><div class="abs" style="left:1237.70px;top:170.80px;width:1.08px;height:1.8px;background:#d4d4d4;opacity:0.3"></div><div class="abs" style="left:1238.78px;top:170.80px;width:7.56px;height:1.8px;background:#9cdcfe;opacity:0.3"></div><div class="abs" style="left:1260.38px;top:170.80px;width:1.08px;height:1.8px;background:#d4d4d4;opacity:0.3"></div><div class="abs" style="left:1262.54px;top:170.80px;width:1.08px;height:1.8px;background:#b5cea8;opacity:0.3"></div><div class="abs" style="left:1263.62px;top:170.80px;width:1.08px;height:1.8px;background:#d4d4d4;opacity:0.3"></div><div class="abs" style="left:1220.42px;top:174.80px;width:10.80px;height:1.8px;background:#9cdcfe;opacity:0.3"></div><div class="abs" style="left:1231.22px;top:174.80px;width:1.08px;height:1.8px;background:#d4d4d4;opacity:0.3"></div><div class="abs" style="left:1232.30px;top:174.80px;width:5.40px;height:1.8px;background:#9cdcfe;opacity:0.3"></div><div class="abs" style="left:1237.70px;top:174.80px;width:1.08px;height:1.8px;background:#d4d4d4;opacity:0.3"></div><div class="abs" style="left:1238.78px;top:174.80px;width:14.04px;height:1.8px;background:#9cdcfe;opacity:0.3"></div><div class="abs" style="left:1260.38px;top:174.80px;width:1.08px;height:1.8px;background:#d4d4d4;opacity:0.3"></div><div class="abs" style="left:1262.54px;top:174.80px;width:1.08px;height:1.8px;background:#b5cea8;opacity:0.3"></div><div class="abs" style="left:1263.62px;top:174.80px;width:1.08px;height:1.8px;background:#d4d4d4;opacity:0.3"></div><div class="abs" style="left:1220.42px;top:176.80px;width:10.80px;height:1.8px;background:#9cdcfe;opacity:0.3"></div><div class="abs" style="left:1231.22px;top:176.80px;width:1.08px;height:1.8px;background:#d4d4d4;opacity:0.3"></div><div class="abs" style="left:1232.30px;top:176.80px;width:5.40px;height:1.8px;background:#9cdcfe;opacity:0.3"></div><div class="abs" style="left:1237.70px;top:176.80px;width:1.08px;height:1.8px;background:#d4d4d4;opacity:0.3"></div><div class="abs" style="left:1238.78px;top:176.80px;width:15.12px;height:1.8px;background:#9cdcfe;opacity:0.3"></div><div class="abs" style="left:1260.38px;top:176.80px;width:1.08px;height:1.8px;background:#d4d4d4;opacity:0.3"></div><div class="abs" style="left:1262.54px;top:176.80px;width:1.08px;height:1.8px;background:#b5cea8;opacity:0.3"></div><div class="abs" style="left:1263.62px;top:176.80px;width:1.08px;height:1.8px;background:#d4d4d4;opacity:0.3"></div><div class="abs" style="left:1220.42px;top:178.80px;width:10.80px;height:1.8px;background:#9cdcfe;opacity:0.3"></div><div class="abs" style="left:1231.22px;top:178.80px;width:1.08px;height:1.8px;background:#d4d4d4;opacity:0.3"></div><div class="abs" style="left:1232.30px;top:178.80px;width:5.40px;height:1.8px;background:#9cdcfe;opacity:0.3"></div><div class="abs" style="left:1237.70px;top:178.80px;width:1.08px;height:1.8px;background:#d4d4d4;opacity:0.3"></div><div class="abs" style="left:1238.78px;top:178.80px;width:12.96px;height:1.8px;background:#9cdcfe;opacity:0.3"></div><div class="abs" style="left:1260.38px;top:178.80px;width:1.08px;height:1.8px;background:#d4d4d4;opacity:0.3"></div><div class="abs" style="left:1262.54px;top:178.80px;width:1.08px;height:1.8px;background:#b5cea8;opacity:0.3"></div><div class="abs" style="left:1263.62px;top:178.80px;width:1.08px;height:1.8px;background:#d4d4d4;opacity:0.3"></div><div class="abs" style="left:1220.42px;top:180.80px;width:10.80px;height:1.8px;background:#9cdcfe;opacity:0.3"></div><div class="abs" style="left:1231.22px;top:180.80px;width:1.08px;height:1.8px;background:#d4d4d4;opacity:0.3"></div><div class="abs" style="left:1232.30px;top:180.80px;width:5.40px;height:1.8px;background:#9cdcfe;opacity:0.3"></div><div class="abs" style="left:1237.70px;top:180.80px;width:1.08px;height:1.8px;background:#d4d4d4;opacity:0.3"></div><div class="abs" style="left:1238.78px;top:180.80px;width:17.28px;height:1.8px;background:#9cdcfe;opacity:0.3"></div><div class="abs" style="left:1260.38px;top:180.80px;width:1.08px;height:1.8px;background:#d4d4d4;opacity:0.3"></div><div class="abs" style="left:1262.54px;top:180.80px;width:1.08px;height:1.8px;background:#b5cea8;opacity:0.3"></div><div class="abs" style="left:1263.62px;top:180.80px;width:1.08px;height:1.8px;background:#d4d4d4;opacity:0.3"></div><div class="abs" style="left:1220.42px;top:182.80px;width:10.80px;height:1.8px;background:#9cdcfe;opacity:0.3"></div><div class="abs" style="left:1231.22px;top:182.80px;width:1.08px;height:1.8px;background:#d4d4d4;opacity:0.3"></div><div class="abs" style="left:1232.30px;top:182.80px;width:5.40px;height:1.8px;background:#9cdcfe;opacity:0.3"></div><div class="abs" style="left:1237.70px;top:182.80px;width:1.08px;height:1.8px;background:#d4d4d4;opacity:0.3"></div><div class="abs" style="left:1238.78px;top:182.80px;width:3.24px;height:1.8px;background:#9cdcfe;opacity:0.3"></div><div class="abs" style="left:1260.38px;top:182.80px;width:1.08px;height:1.8px;background:#d4d4d4;opacity:0.3"></div><div class="abs" style="left:1262.54px;top:182.80px;width:1.08px;height:1.8px;background:#b5cea8;opacity:0.3"></div><div class="abs" style="left:1263.62px;top:182.80px;width:1.08px;height:1.8px;background:#d4d4d4;opacity:0.3"></div><div class="abs" style="left:1220.42px;top:184.80px;width:10.80px;height:1.8px;background:#9cdcfe;opacity:0.3"></div><div class="abs" style="left:1231.22px;top:184.80px;width:1.08px;height:1.8px;background:#d4d4d4;opacity:0.3"></div><div class="abs" style="left:1232.30px;top:184.80px;width:5.40px;height:1.8px;background:#9cdcfe;opacity:0.3"></div><div class="abs" style="left:1237.70px;top:184.80px;width:1.08px;height:1.8px;background:#d4d4d4;opacity:0.3"></div><div class="abs" style="left:1238.78px;top:184.80px;width:21.60px;height:1.8px;background:#9cdcfe;opacity:0.3"></div><div class="abs" style="left:1260.38px;top:184.80px;width:1.08px;height:1.8px;background:#d4d4d4;opacity:0.3"></div><div class="abs" style="left:1262.54px;top:184.80px;width:1.08px;height:1.8px;background:#b5cea8;opacity:0.3"></div><div class="abs" style="left:1263.62px;top:184.80px;width:1.08px;height:1.8px;background:#d4d4d4;opacity:0.3"></div><div class="abs" style="left:1220.42px;top:186.80px;width:10.80px;height:1.8px;background:#9cdcfe;opacity:0.3"></div><div class="abs" style="left:1231.22px;top:186.80px;width:1.08px;height:1.8px;background:#d4d4d4;opacity:0.3"></div><div class="abs" style="left:1232.30px;top:186.80px;width:5.40px;height:1.8px;background:#9cdcfe;opacity:0.3"></div><div class="abs" style="left:1237.70px;top:186.80px;width:1.08px;height:1.8px;background:#d4d4d4;opacity:0.3"></div><div class="abs" style="left:1238.78px;top:186.80px;width:7.56px;height:1.8px;background:#9cdcfe;opacity:0.3"></div><div class="abs" style="left:1260.38px;top:186.80px;width:1.08px;height:1.8px;background:#d4d4d4;opacity:0.3"></div><div class="abs" style="left:1262.54px;top:186.80px;width:1.08px;height:1.8px;background:#b5cea8;opacity:0.3"></div><div class="abs" style="left:1263.62px;top:186.80px;width:1.08px;height:1.8px;background:#d4d4d4;opacity:0.3"></div><div class="abs" style="left:1220.42px;top:190.80px;width:10.80px;height:1.8px;background:#9cdcfe;opacity:0.3"></div><div class="abs" style="left:1231.22px;top:190.80px;width:1.08px;height:1.8px;background:#d4d4d4;opacity:0.3"></div><div class="abs" style="left:1232.30px;top:190.80px;width:3.24px;height:1.8px;background:#9cdcfe;opacity:0.3"></div><div class="abs" style="left:1235.54px;top:190.80px;width:1.08px;height:1.8px;background:#d4d4d4;opacity:0.3"></div><div class="abs" style="left:1236.62px;top:190.80px;width:14.04px;height:1.8px;background:#9cdcfe;opacity:0.3"></div><div class="abs" style="left:1259.30px;top:190.80px;width:1.08px;height:1.8px;background:#d4d4d4;opacity:0.3"></div><div class="abs" style="left:1261.46px;top:190.80px;width:1.08px;height:1.8px;background:#b5cea8;opacity:0.3"></div><div class="abs" style="left:1262.54px;top:190.80px;width:1.08px;height:1.8px;background:#d4d4d4;opacity:0.3"></div><div class="abs" style="left:1220.42px;top:192.80px;width:10.80px;height:1.8px;background:#9cdcfe;opacity:0.3"></div><div class="abs" style="left:1231.22px;top:192.80px;width:1.08px;height:1.8px;background:#d4d4d4;opacity:0.3"></div><div class="abs" style="left:1232.30px;top:192.80px;width:3.24px;height:1.8px;background:#9cdcfe;opacity:0.3"></div><div class="abs" style="left:1235.54px;top:192.80px;width:1.08px;height:1.8px;background:#d4d4d4;opacity:0.3"></div><div class="abs" style="left:1236.62px;top:192.80px;width:15.12px;height:1.8px;background:#9cdcfe;opacity:0.3"></div><div class="abs" style="left:1259.30px;top:192.80px;width:1.08px;height:1.8px;background:#d4d4d4;opacity:0.3"></div><div class="abs" style="left:1261.46px;top:192.80px;width:1.08px;height:1.8px;background:#b5cea8;opacity:0.3"></div><div class="abs" style="left:1262.54px;top:192.80px;width:1.08px;height:1.8px;background:#d4d4d4;opacity:0.3"></div><div class="abs" style="left:1220.42px;top:194.80px;width:10.80px;height:1.8px;background:#9cdcfe;opacity:0.3"></div><div class="abs" style="left:1231.22px;top:194.80px;width:1.08px;height:1.8px;background:#d4d4d4;opacity:0.3"></div><div class="abs" style="left:1232.30px;top:194.80px;width:3.24px;height:1.8px;background:#9cdcfe;opacity:0.3"></div><div class="abs" style="left:1235.54px;top:194.80px;width:1.08px;height:1.8px;background:#d4d4d4;opacity:0.3"></div><div class="abs" style="left:1236.62px;top:194.80px;width:12.96px;height:1.8px;background:#9cdcfe;opacity:0.3"></div><div class="abs" style="left:1259.30px;top:194.80px;width:1.08px;height:1.8px;background:#d4d4d4;opacity:0.3"></div><div class="abs" style="left:1261.46px;top:194.80px;width:1.08px;height:1.8px;background:#b5cea8;opacity:0.3"></div><div class="abs" style="left:1262.54px;top:194.80px;width:1.08px;height:1.8px;background:#d4d4d4;opacity:0.3"></div><div class="abs" style="left:1220.42px;top:196.80px;width:10.80px;height:1.8px;background:#9cdcfe;opacity:0.3"></div><div class="abs" style="left:1231.22px;top:196.80px;width:1.08px;height:1.8px;background:#d4d4d4;opacity:0.3"></div><div class="abs" style="left:1232.30px;top:196.80px;width:3.24px;height:1.8px;background:#9cdcfe;opacity:0.3"></div><div class="abs" style="left:1235.54px;top:196.80px;width:1.08px;height:1.8px;background:#d4d4d4;opacity:0.3"></div><div class="abs" style="left:1236.62px;top:196.80px;width:17.28px;height:1.8px;background:#9cdcfe;opacity:0.3"></div><div class="abs" style="left:1259.30px;top:196.80px;width:1.08px;height:1.8px;background:#d4d4d4;opacity:0.3"></div><div class="abs" style="left:1261.46px;top:196.80px;width:1.08px;height:1.8px;background:#b5cea8;opacity:0.3"></div><div class="abs" style="left:1262.54px;top:196.80px;width:1.08px;height:1.8px;background:#d4d4d4;opacity:0.3"></div><div class="abs" style="left:1220.42px;top:198.80px;width:10.80px;height:1.8px;background:#9cdcfe;opacity:0.3"></div><div class="abs" style="left:1231.22px;top:198.80px;width:1.08px;height:1.8px;background:#d4d4d4;opacity:0.3"></div><div class="abs" style="left:1232.30px;top:198.80px;width:3.24px;height:1.8px;background:#9cdcfe;opacity:0.3"></div><div class="abs" style="left:1235.54px;top:198.80px;width:1.08px;height:1.8px;background:#d4d4d4;opacity:0.3"></div><div class="abs" style="left:1236.62px;top:198.80px;width:3.24px;height:1.8px;background:#9cdcfe;opacity:0.3"></div><div class="abs" style="left:1259.30px;top:198.80px;width:1.08px;height:1.8px;background:#d4d4d4;opacity:0.3"></div><div class="abs" style="left:1261.46px;top:198.80px;width:1.08px;height:1.8px;background:#b5cea8;opacity:0.3"></div><div class="abs" style="left:1262.54px;top:198.80px;width:1.08px;height:1.8px;background:#d4d4d4;opacity:0.3"></div><div class="abs" style="left:1220.42px;top:200.80px;width:10.80px;height:1.8px;background:#9cdcfe;opacity:0.3"></div><div class="abs" style="left:1231.22px;top:200.80px;width:1.08px;height:1.8px;background:#d4d4d4;opacity:0.3"></div><div class="abs" style="left:1232.30px;top:200.80px;width:3.24px;height:1.8px;background:#9cdcfe;opacity:0.3"></div><div class="abs" style="left:1235.54px;top:200.80px;width:1.08px;height:1.8px;background:#d4d4d4;opacity:0.3"></div><div class="abs" style="left:1236.62px;top:200.80px;width:21.60px;height:1.8px;background:#9cdcfe;opacity:0.3"></div><div class="abs" style="left:1259.30px;top:200.80px;width:1.08px;height:1.8px;background:#d4d4d4;opacity:0.3"></div><div class="abs" style="left:1261.46px;top:200.80px;width:1.08px;height:1.8px;background:#b5cea8;opacity:0.3"></div><div class="abs" style="left:1262.54px;top:200.80px;width:1.08px;height:1.8px;background:#d4d4d4;opacity:0.3"></div><div class="abs" style="left:1220.42px;top:202.80px;width:10.80px;height:1.8px;background:#9cdcfe;opacity:0.3"></div><div class="abs" style="left:1231.22px;top:202.80px;width:1.08px;height:1.8px;background:#d4d4d4;opacity:0.3"></div><div class="abs" style="left:1232.30px;top:202.80px;width:3.24px;height:1.8px;background:#9cdcfe;opacity:0.3"></div><div class="abs" style="left:1235.54px;top:202.80px;width:1.08px;height:1.8px;background:#d4d4d4;opacity:0.3"></div><div class="abs" style="left:1236.62px;top:202.80px;width:7.56px;height:1.8px;background:#9cdcfe;opacity:0.3"></div><div class="abs" style="left:1259.30px;top:202.80px;width:1.08px;height:1.8px;background:#d4d4d4;opacity:0.3"></div><div class="abs" style="left:1261.46px;top:202.80px;width:1.08px;height:1.8px;background:#b5cea8;opacity:0.3"></div><div class="abs" style="left:1262.54px;top:202.80px;width:1.08px;height:1.8px;background:#d4d4d4;opacity:0.3"></div><div class="abs" style="left:1220.42px;top:206.80px;width:10.80px;height:1.8px;background:#9cdcfe;opacity:0.3"></div><div class="abs" style="left:1231.22px;top:206.80px;width:1.08px;height:1.8px;background:#d4d4d4;opacity:0.3"></div><div class="abs" style="left:1232.30px;top:206.80px;width:5.40px;height:1.8px;background:#9cdcfe;opacity:0.3"></div><div class="abs" style="left:1237.70px;top:206.80px;width:1.08px;height:1.8px;background:#d4d4d4;opacity:0.3"></div><div class="abs" style="left:1238.78px;top:206.80px;width:14.04px;height:1.8px;background:#9cdcfe;opacity:0.3"></div><div class="abs" style="left:1261.46px;top:206.80px;width:1.08px;height:1.8px;background:#d4d4d4;opacity:0.3"></div><div class="abs" style="left:1263.62px;top:206.80px;width:1.08px;height:1.8px;background:#b5cea8;opacity:0.3"></div><div class="abs" style="left:1264.70px;top:206.80px;width:1.08px;height:1.8px;background:#d4d4d4;opacity:0.3"></div><div class="abs" style="left:1220.42px;top:208.80px;width:10.80px;height:1.8px;background:#9cdcfe;opacity:0.3"></div><div class="abs" style="left:1231.22px;top:208.80px;width:1.08px;height:1.8px;background:#d4d4d4;opacity:0.3"></div><div class="abs" style="left:1232.30px;top:208.80px;width:5.40px;height:1.8px;background:#9cdcfe;opacity:0.3"></div><div class="abs" style="left:1237.70px;top:208.80px;width:1.08px;height:1.8px;background:#d4d4d4;opacity:0.3"></div><div class="abs" style="left:1238.78px;top:208.80px;width:15.12px;height:1.8px;background:#9cdcfe;opacity:0.3"></div><div class="abs" style="left:1261.46px;top:208.80px;width:1.08px;height:1.8px;background:#d4d4d4;opacity:0.3"></div><div class="abs" style="left:1263.62px;top:208.80px;width:1.08px;height:1.8px;background:#b5cea8;opacity:0.3"></div><div class="abs" style="left:1264.70px;top:208.80px;width:1.08px;height:1.8px;background:#d4d4d4;opacity:0.3"></div><div class="abs" style="left:1220.42px;top:210.80px;width:10.80px;height:1.8px;background:#9cdcfe;opacity:0.3"></div><div class="abs" style="left:1231.22px;top:210.80px;width:1.08px;height:1.8px;background:#d4d4d4;opacity:0.3"></div><div class="abs" style="left:1232.30px;top:210.80px;width:5.40px;height:1.8px;background:#9cdcfe;opacity:0.3"></div><div class="abs" style="left:1237.70px;top:210.80px;width:1.08px;height:1.8px;background:#d4d4d4;opacity:0.3"></div><div class="abs" style="left:1238.78px;top:210.80px;width:12.96px;height:1.8px;background:#9cdcfe;opacity:0.3"></div><div class="abs" style="left:1261.46px;top:210.80px;width:1.08px;height:1.8px;background:#d4d4d4;opacity:0.3"></div><div class="abs" style="left:1263.62px;top:210.80px;width:1.08px;height:1.8px;background:#b5cea8;opacity:0.3"></div><div class="abs" style="left:1264.70px;top:210.80px;width:1.08px;height:1.8px;background:#d4d4d4;opacity:0.3"></div><div class="abs" style="left:1220.42px;top:212.80px;width:10.80px;height:1.8px;background:#9cdcfe;opacity:0.3"></div><div class="abs" style="left:1231.22px;top:212.80px;width:1.08px;height:1.8px;background:#d4d4d4;opacity:0.3"></div><div class="abs" style="left:1232.30px;top:212.80px;width:5.40px;height:1.8px;background:#9cdcfe;opacity:0.3"></div><div class="abs" style="left:1237.70px;top:212.80px;width:1.08px;height:1.8px;background:#d4d4d4;opacity:0.3"></div><div class="abs" style="left:1238.78px;top:212.80px;width:17.28px;height:1.8px;background:#9cdcfe;opacity:0.3"></div><div class="abs" style="left:1261.46px;top:212.80px;width:1.08px;height:1.8px;background:#d4d4d4;opacity:0.3"></div><div class="abs" style="left:1263.62px;top:212.80px;width:1.08px;height:1.8px;background:#b5cea8;opacity:0.3"></div><div class="abs" style="left:1264.70px;top:212.80px;width:1.08px;height:1.8px;background:#d4d4d4;opacity:0.3"></div><div class="abs" style="left:1220.42px;top:214.80px;width:10.80px;height:1.8px;background:#9cdcfe;opacity:0.3"></div><div class="abs" style="left:1231.22px;top:214.80px;width:1.08px;height:1.8px;background:#d4d4d4;opacity:0.3"></div><div class="abs" style="left:1232.30px;top:214.80px;width:5.40px;height:1.8px;background:#9cdcfe;opacity:0.3"></div><div class="abs" style="left:1237.70px;top:214.80px;width:1.08px;height:1.8px;background:#d4d4d4;opacity:0.3"></div><div class="abs" style="left:1238.78px;top:214.80px;width:3.24px;height:1.8px;background:#9cdcfe;opacity:0.3"></div><div class="abs" style="left:1261.46px;top:214.80px;width:1.08px;height:1.8px;background:#d4d4d4;opacity:0.3"></div><div class="abs" style="left:1263.62px;top:214.80px;width:1.08px;height:1.8px;background:#b5cea8;opacity:0.3"></div><div class="abs" style="left:1264.70px;top:214.80px;width:1.08px;height:1.8px;background:#d4d4d4;opacity:0.3"></div><div class="abs" style="left:1220.42px;top:216.80px;width:10.80px;height:1.8px;background:#9cdcfe;opacity:0.3"></div><div class="abs" style="left:1231.22px;top:216.80px;width:1.08px;height:1.8px;background:#d4d4d4;opacity:0.3"></div><div class="abs" style="left:1232.30px;top:216.80px;width:5.40px;height:1.8px;background:#9cdcfe;opacity:0.3"></div><div class="abs" style="left:1237.70px;top:216.80px;width:1.08px;height:1.8px;background:#d4d4d4;opacity:0.3"></div><div class="abs" style="left:1238.78px;top:216.80px;width:21.60px;height:1.8px;background:#9cdcfe;opacity:0.3"></div><div class="abs" style="left:1261.46px;top:216.80px;width:1.08px;height:1.8px;background:#d4d4d4;opacity:0.3"></div><div class="abs" style="left:1263.62px;top:216.80px;width:1.08px;height:1.8px;background:#b5cea8;opacity:0.3"></div><div class="abs" style="left:1264.70px;top:216.80px;width:1.08px;height:1.8px;background:#d4d4d4;opacity:0.3"></div><div class="abs" style="left:1220.42px;top:218.80px;width:10.80px;height:1.8px;background:#9cdcfe;opacity:0.3"></div><div class="abs" style="left:1231.22px;top:218.80px;width:1.08px;height:1.8px;background:#d4d4d4;opacity:0.3"></div><div class="abs" style="left:1232.30px;top:218.80px;width:5.40px;height:1.8px;background:#9cdcfe;opacity:0.3"></div><div class="abs" style="left:1237.70px;top:218.80px;width:1.08px;height:1.8px;background:#d4d4d4;opacity:0.3"></div><div class="abs" style="left:1238.78px;top:218.80px;width:7.56px;height:1.8px;background:#9cdcfe;opacity:0.3"></div><div class="abs" style="left:1261.46px;top:218.80px;width:1.08px;height:1.8px;background:#d4d4d4;opacity:0.3"></div><div class="abs" style="left:1263.62px;top:218.80px;width:1.08px;height:1.8px;background:#b5cea8;opacity:0.3"></div><div class="abs" style="left:1264.70px;top:218.80px;width:1.08px;height:1.8px;background:#d4d4d4;opacity:0.3"></div><div class="abs" style="left:1220.42px;top:222.80px;width:10.80px;height:1.8px;background:#9cdcfe;opacity:0.3"></div><div class="abs" style="left:1231.22px;top:222.80px;width:1.08px;height:1.8px;background:#d4d4d4;opacity:0.3"></div><div class="abs" style="left:1232.30px;top:222.80px;width:4.32px;height:1.8px;background:#9cdcfe;opacity:0.3"></div><div class="abs" style="left:1236.62px;top:222.80px;width:1.08px;height:1.8px;background:#d4d4d4;opacity:0.3"></div><div class="abs" style="left:1237.70px;top:222.80px;width:14.04px;height:1.8px;background:#9cdcfe;opacity:0.3"></div><div class="abs" style="left:1260.38px;top:222.80px;width:1.08px;height:1.8px;background:#d4d4d4;opacity:0.3"></div><div class="abs" style="left:1262.54px;top:222.80px;width:1.08px;height:1.8px;background:#b5cea8;opacity:0.3"></div><div class="abs" style="left:1263.62px;top:222.80px;width:1.08px;height:1.8px;background:#d4d4d4;opacity:0.3"></div><div class="abs" style="left:1220.42px;top:224.80px;width:10.80px;height:1.8px;background:#9cdcfe;opacity:0.3"></div><div class="abs" style="left:1231.22px;top:224.80px;width:1.08px;height:1.8px;background:#d4d4d4;opacity:0.3"></div><div class="abs" style="left:1232.30px;top:224.80px;width:4.32px;height:1.8px;background:#9cdcfe;opacity:0.3"></div><div class="abs" style="left:1236.62px;top:224.80px;width:1.08px;height:1.8px;background:#d4d4d4;opacity:0.3"></div><div class="abs" style="left:1237.70px;top:224.80px;width:15.12px;height:1.8px;background:#9cdcfe;opacity:0.3"></div><div class="abs" style="left:1260.38px;top:224.80px;width:1.08px;height:1.8px;background:#d4d4d4;opacity:0.3"></div><div class="abs" style="left:1262.54px;top:224.80px;width:1.08px;height:1.8px;background:#b5cea8;opacity:0.3"></div><div class="abs" style="left:1263.62px;top:224.80px;width:1.08px;height:1.8px;background:#d4d4d4;opacity:0.3"></div><div class="abs" style="left:1220.42px;top:226.80px;width:10.80px;height:1.8px;background:#9cdcfe;opacity:0.3"></div><div class="abs" style="left:1231.22px;top:226.80px;width:1.08px;height:1.8px;background:#d4d4d4;opacity:0.3"></div><div class="abs" style="left:1232.30px;top:226.80px;width:4.32px;height:1.8px;background:#9cdcfe;opacity:0.3"></div><div class="abs" style="left:1236.62px;top:226.80px;width:1.08px;height:1.8px;background:#d4d4d4;opacity:0.3"></div><div class="abs" style="left:1237.70px;top:226.80px;width:12.96px;height:1.8px;background:#9cdcfe;opacity:0.3"></div><div class="abs" style="left:1260.38px;top:226.80px;width:1.08px;height:1.8px;background:#d4d4d4;opacity:0.3"></div><div class="abs" style="left:1262.54px;top:226.80px;width:1.08px;height:1.8px;background:#b5cea8;opacity:0.3"></div><div class="abs" style="left:1263.62px;top:226.80px;width:1.08px;height:1.8px;background:#d4d4d4;opacity:0.3"></div><div class="abs" style="left:1220.42px;top:228.80px;width:10.80px;height:1.8px;background:#9cdcfe;opacity:0.3"></div><div class="abs" style="left:1231.22px;top:228.80px;width:1.08px;height:1.8px;background:#d4d4d4;opacity:0.3"></div><div class="abs" style="left:1232.30px;top:228.80px;width:4.32px;height:1.8px;background:#9cdcfe;opacity:0.3"></div><div class="abs" style="left:1236.62px;top:228.80px;width:1.08px;height:1.8px;background:#d4d4d4;opacity:0.3"></div><div class="abs" style="left:1237.70px;top:228.80px;width:17.28px;height:1.8px;background:#9cdcfe;opacity:0.3"></div><div class="abs" style="left:1260.38px;top:228.80px;width:1.08px;height:1.8px;background:#d4d4d4;opacity:0.3"></div><div class="abs" style="left:1262.54px;top:228.80px;width:1.08px;height:1.8px;background:#b5cea8;opacity:0.3"></div><div class="abs" style="left:1263.62px;top:228.80px;width:1.08px;height:1.8px;background:#d4d4d4;opacity:0.3"></div><div class="abs" style="left:1220.42px;top:230.80px;width:10.80px;height:1.8px;background:#9cdcfe;opacity:0.3"></div><div class="abs" style="left:1231.22px;top:230.80px;width:1.08px;height:1.8px;background:#d4d4d4;opacity:0.3"></div><div class="abs" style="left:1232.30px;top:230.80px;width:4.32px;height:1.8px;background:#9cdcfe;opacity:0.3"></div><div class="abs" style="left:1236.62px;top:230.80px;width:1.08px;height:1.8px;background:#d4d4d4;opacity:0.3"></div><div class="abs" style="left:1237.70px;top:230.80px;width:3.24px;height:1.8px;background:#9cdcfe;opacity:0.3"></div><div class="abs" style="left:1260.38px;top:230.80px;width:1.08px;height:1.8px;background:#d4d4d4;opacity:0.3"></div><div class="abs" style="left:1262.54px;top:230.80px;width:1.08px;height:1.8px;background:#b5cea8;opacity:0.3"></div><div class="abs" style="left:1263.62px;top:230.80px;width:1.08px;height:1.8px;background:#d4d4d4;opacity:0.3"></div><div class="abs" style="left:1220.42px;top:232.80px;width:10.80px;height:1.8px;background:#9cdcfe;opacity:0.3"></div><div class="abs" style="left:1231.22px;top:232.80px;width:1.08px;height:1.8px;background:#d4d4d4;opacity:0.3"></div><div class="abs" style="left:1232.30px;top:232.80px;width:4.32px;height:1.8px;background:#9cdcfe;opacity:0.3"></div><div class="abs" style="left:1236.62px;top:232.80px;width:1.08px;height:1.8px;background:#d4d4d4;opacity:0.3"></div><div class="abs" style="left:1237.70px;top:232.80px;width:21.60px;height:1.8px;background:#9cdcfe;opacity:0.3"></div><div class="abs" style="left:1260.38px;top:232.80px;width:1.08px;height:1.8px;background:#d4d4d4;opacity:0.3"></div><div class="abs" style="left:1262.54px;top:232.80px;width:1.08px;height:1.8px;background:#b5cea8;opacity:0.3"></div><div class="abs" style="left:1263.62px;top:232.80px;width:1.08px;height:1.8px;background:#d4d4d4;opacity:0.3"></div><div class="abs" style="left:1220.42px;top:234.80px;width:10.80px;height:1.8px;background:#9cdcfe;opacity:0.3"></div><div class="abs" style="left:1231.22px;top:234.80px;width:1.08px;height:1.8px;background:#d4d4d4;opacity:0.3"></div><div class="abs" style="left:1232.30px;top:234.80px;width:4.32px;height:1.8px;background:#9cdcfe;opacity:0.3"></div><div class="abs" style="left:1236.62px;top:234.80px;width:1.08px;height:1.8px;background:#d4d4d4;opacity:0.3"></div><div class="abs" style="left:1237.70px;top:234.80px;width:7.56px;height:1.8px;background:#9cdcfe;opacity:0.3"></div><div class="abs" style="left:1260.38px;top:234.80px;width:1.08px;height:1.8px;background:#d4d4d4;opacity:0.3"></div><div class="abs" style="left:1262.54px;top:234.80px;width:1.08px;height:1.8px;background:#b5cea8;opacity:0.3"></div><div class="abs" style="left:1263.62px;top:234.80px;width:1.08px;height:1.8px;background:#d4d4d4;opacity:0.3"></div><div class="abs" style="left:1220.42px;top:236.80px;width:14.04px;height:1.8px;background:#569cd6;opacity:0.3"></div><div class="abs" style="left:1234.46px;top:236.80px;width:1.08px;height:1.8px;background:#d4d4d4;opacity:0.3"></div><div class="abs" style="left:1235.54px;top:236.80px;width:6.48px;height:1.8px;background:#569cd6;opacity:0.3"></div><div class="abs" style="left:1242.02px;top:236.80px;width:1.08px;height:1.8px;background:#d4d4d4;opacity:0.3"></div><div class="abs" style="left:1243.10px;top:236.80px;width:10.80px;height:1.8px;background:#9cdcfe;opacity:0.3"></div><div class="abs" style="left:1253.90px;top:236.80px;width:5.40px;height:1.8px;background:#d4d4d4;opacity:0.3"></div><div class="abs" style="left:1259.30px;top:236.80px;width:3.24px;height:1.8px;background:#b5cea8;opacity:0.3"></div><div class="abs" style="left:1262.54px;top:236.80px;width:2.16px;height:1.8px;background:#d4d4d4;opacity:0.3"></div><div class="abs" style="left:1264.70px;top:236.80px;width:2.16px;height:1.8px;background:#ce9178;opacity:0.3"></div><div class="abs" style="left:1266.86px;top:236.80px;width:2.16px;height:1.8px;background:#d4d4d4;opacity:0.3"></div><div class="abs" style="left:1220.42px;top:240.80px;width:11.88px;height:1.8px;background:#9cdcfe;opacity:0.3"></div><div class="abs" style="left:1232.30px;top:240.80px;width:1.08px;height:1.8px;background:#d4d4d4;opacity:0.3"></div><div class="abs" style="left:1233.38px;top:240.80px;width:6.48px;height:1.8px;background:#dcdcaa;opacity:0.3"></div><div class="abs" style="left:1239.86px;top:240.80px;width:1.08px;height:1.8px;background:#d4d4d4;opacity:0.3"></div><div class="abs" style="left:1240.94px;top:240.80px;width:2.16px;height:1.8px;background:#b5cea8;opacity:0.3"></div><div class="abs" style="left:1243.10px;top:240.80px;width:28.08px;height:1.8px;background:#6a9955;opacity:0.3"></div><div class="abs" style="left:1271.18px;top:240.80px;width:2.16px;height:1.8px;background:#d4d4d4;opacity:0.3"></div><div class="abs" style="left:1273.34px;top:240.80px;width:2.16px;height:1.8px;background:#b5cea8;opacity:0.3"></div><div class="abs" style="left:1275.50px;top:240.80px;width:2.16px;height:1.8px;background:#d4d4d4;opacity:0.3"></div><div class="abs" style="left:1277.66px;top:240.80px;width:4.32px;height:1.8px;background:#b5cea8;opacity:0.3"></div><div class="abs" style="left:1281.98px;top:240.80px;width:2.16px;height:1.8px;background:#d4d4d4;opacity:0.3"></div><div class="abs" style="left:1216.10px;top:242.80px;width:1.08px;height:1.8px;background:#d4d4d4;opacity:0.3"></div><div class="abs" style="left:1216.10px;top:246.80px;width:23.76px;height:1.8px;background:#569cd6;opacity:0.3"></div><div class="abs" style="left:1240.94px;top:246.80px;width:4.32px;height:1.8px;background:#569cd6;opacity:0.3"></div><div class="abs" style="left:1246.34px;top:246.80px;width:7.56px;height:1.8px;background:#dcdcaa;opacity:0.3"></div><div class="abs" style="left:1253.90px;top:246.80px;width:1.08px;height:1.8px;background:#d4d4d4;opacity:0.3"></div><div class="abs" style="left:1254.98px;top:246.80px;width:4.32px;height:1.8px;background:#4ec9b0;opacity:0.3"></div><div class="abs" style="left:1259.30px;top:246.80px;width:2.16px;height:1.8px;background:#d4d4d4;opacity:0.3"></div><div class="abs" style="left:1261.46px;top:246.80px;width:7.56px;height:1.8px;background:#4ec9b0;opacity:0.3"></div><div class="abs" style="left:1269.02px;top:246.80px;width:2.16px;height:1.8px;background:#d4d4d4;opacity:0.3"></div><div class="abs" style="left:1271.18px;top:246.80px;width:3.24px;height:1.8px;background:#9cdcfe;opacity:0.3"></div><div class="abs" style="left:1274.42px;top:246.80px;width:2.16px;height:1.8px;background:#d4d4d4;opacity:0.3"></div><div class="abs" style="left:1276.58px;top:246.80px;width:4.32px;height:1.8px;background:#4ec9b0;opacity:0.3"></div><div class="abs" style="left:1280.90px;top:246.80px;width:2.16px;height:1.8px;background:#d4d4d4;opacity:0.3"></div><div class="abs" style="left:1283.06px;top:246.80px;width:6.48px;height:1.8px;background:#4ec9b0;opacity:0.3"></div><div class="abs" style="left:1289.54px;top:246.80px;width:2.16px;height:1.8px;background:#d4d4d4;opacity:0.3"></div><div class="abs" style="left:1291.70px;top:246.80px;width:3.24px;height:1.8px;background:#9cdcfe;opacity:0.3"></div><div class="abs" style="left:1294.94px;top:246.80px;width:1.08px;height:1.8px;background:#d4d4d4;opacity:0.3"></div><div class="abs" style="left:1216.10px;top:248.80px;width:1.08px;height:1.8px;background:#d4d4d4;opacity:0.3"></div><div class="abs" style="left:1220.42px;top:250.80px;width:4.32px;height:1.8px;background:#569cd6;opacity:0.3"></div><div class="abs" style="left:1224.74px;top:250.80px;width:1.08px;height:1.8px;background:#d4d4d4;opacity:0.3"></div><div class="abs" style="left:1226.90px;top:250.80px;width:2.16px;height:1.8px;background:#9cdcfe;opacity:0.3"></div><div class="abs" style="left:1235.54px;top:250.80px;width:1.08px;height:1.8px;background:#d4d4d4;opacity:0.3"></div><div class="abs" style="left:1237.70px;top:250.80px;width:3.24px;height:1.8px;background:#9cdcfe;opacity:0.3"></div><div class="abs" style="left:1240.94px;top:250.80px;width:1.08px;height:1.8px;background:#d4d4d4;opacity:0.3"></div><div class="abs" style="left:1242.02px;top:250.80px;width:5.40px;height:1.8px;background:#9cdcfe;opacity:0.3"></div><div class="abs" style="left:1247.42px;top:250.80px;width:1.08px;height:1.8px;background:#d4d4d4;opacity:0.3"></div><div class="abs" style="left:1248.50px;top:250.80px;width:8.64px;height:1.8px;background:#9cdcfe;opacity:0.3"></div><div class="abs" style="left:1257.14px;top:250.80px;width:1.08px;height:1.8px;background:#d4d4d4;opacity:0.3"></div><div class="abs" style="left:1258.22px;top:250.80px;width:5.40px;height:1.8px;background:#9cdcfe;opacity:0.3"></div><div class="abs" style="left:1263.62px;top:250.80px;width:1.08px;height:1.8px;background:#d4d4d4;opacity:0.3"></div><div class="abs" style="left:1220.42px;top:254.80px;width:4.32px;height:1.8px;background:#569cd6;opacity:0.3"></div><div class="abs" style="left:1225.82px;top:254.80px;width:9.72px;height:1.8px;background:#9cdcfe;opacity:0.3"></div><div class="abs" style="left:1237.70px;top:254.80px;width:1.08px;height:1.8px;background:#d4d4d4;opacity:0.3"></div><div class="abs" style="left:1239.86px;top:254.80px;width:1.08px;height:1.8px;background:#d4d4d4;opacity:0.3"></div><div class="abs" style="left:1240.94px;top:254.80px;width:2.16px;height:1.8px;background:#9cdcfe;opacity:0.3"></div><div class="abs" style="left:1243.10px;top:254.80px;width:1.08px;height:1.8px;background:#d4d4d4;opacity:0.3"></div><div class="abs" style="left:1244.18px;top:254.80px;width:10.80px;height:1.8px;background:#9cdcfe;opacity:0.3"></div><div class="abs" style="left:1254.98px;top:254.80px;width:1.08px;height:1.8px;background:#d4d4d4;opacity:0.3"></div><div class="abs" style="left:1220.42px;top:256.80px;width:4.32px;height:1.8px;background:#569cd6;opacity:0.3"></div><div class="abs" style="left:1225.82px;top:256.80px;width:10.80px;height:1.8px;background:#9cdcfe;opacity:0.3"></div><div class="abs" style="left:1237.70px;top:256.80px;width:1.08px;height:1.8px;background:#d4d4d4;opacity:0.3"></div><div class="abs" style="left:1239.86px;top:256.80px;width:11.88px;height:1.8px;background:#9cdcfe;opacity:0.3"></div><div class="abs" style="left:1251.74px;top:256.80px;width:2.16px;height:1.8px;background:#d4d4d4;opacity:0.3"></div><div class="abs" style="left:1253.90px;top:256.80px;width:6.48px;height:1.8px;background:#dcdcaa;opacity:0.3"></div><div class="abs" style="left:1260.38px;top:256.80px;width:1.08px;height:1.8px;background:#d4d4d4;opacity:0.3"></div><div class="abs" style="left:1261.46px;top:256.80px;width:3.24px;height:1.8px;background:#9cdcfe;opacity:0.3"></div><div class="abs" style="left:1264.70px;top:256.80px;width:2.16px;height:1.8px;background:#d4d4d4;opacity:0.3"></div><div class="abs" style="left:1266.86px;top:256.80px;width:2.16px;height:1.8px;background:#9cdcfe;opacity:0.3"></div><div class="abs" style="left:1269.02px;top:256.80px;width:1.08px;height:1.8px;background:#d4d4d4;opacity:0.3"></div><div class="abs" style="left:1270.10px;top:256.80px;width:14.04px;height:1.8px;background:#9cdcfe;opacity:0.3"></div><div class="abs" style="left:1284.14px;top:256.80px;width:2.16px;height:1.8px;background:#d4d4d4;opacity:0.3"></div><div class="abs" style="left:1220.42px;top:258.80px;width:4.32px;height:1.8px;background:#569cd6;opacity:0.3"></div><div class="abs" style="left:1225.82px;top:258.80px;width:10.80px;height:1.8px;background:#9cdcfe;opacity:0.3"></div><div class="abs" style="left:1237.70px;top:258.80px;width:1.08px;height:1.8px;background:#d4d4d4;opacity:0.3"></div><div class="abs" style="left:1239.86px;top:258.80px;width:2.16px;height:1.8px;background:#9cdcfe;opacity:0.3"></div><div class="abs" style="left:1242.02px;top:258.80px;width:1.08px;height:1.8px;background:#d4d4d4;opacity:0.3"></div><div class="abs" style="left:1243.10px;top:258.80px;width:10.80px;height:1.8px;background:#9cdcfe;opacity:0.3"></div><div class="abs" style="left:1253.90px;top:258.80px;width:1.08px;height:1.8px;background:#d4d4d4;opacity:0.3"></div><div class="abs" style="left:1220.42px;top:260.80px;width:4.32px;height:1.8px;background:#569cd6;opacity:0.3"></div><div class="abs" style="left:1225.82px;top:260.80px;width:8.64px;height:1.8px;background:#9cdcfe;opacity:0.3"></div><div class="abs" style="left:1237.70px;top:260.80px;width:1.08px;height:1.8px;background:#d4d4d4;opacity:0.3"></div><div class="abs" style="left:1239.86px;top:260.80px;width:1.08px;height:1.8px;background:#b5cea8;opacity:0.3"></div><div class="abs" style="left:1240.94px;top:260.80px;width:1.08px;height:1.8px;background:#d4d4d4;opacity:0.3"></div><div class="abs" style="left:1220.42px;top:262.80px;width:4.32px;height:1.8px;background:#569cd6;opacity:0.3"></div><div class="abs" style="left:1225.82px;top:262.80px;width:10.80px;height:1.8px;background:#9cdcfe;opacity:0.3"></div><div class="abs" style="left:1237.70px;top:262.80px;width:1.08px;height:1.8px;background:#d4d4d4;opacity:0.3"></div><div class="abs" style="left:1239.86px;top:262.80px;width:1.08px;height:1.8px;background:#b5cea8;opacity:0.3"></div><div class="abs" style="left:1240.94px;top:262.80px;width:1.08px;height:1.8px;background:#d4d4d4;opacity:0.3"></div><div class="abs" style="left:1220.42px;top:264.80px;width:4.32px;height:1.8px;background:#569cd6;opacity:0.3"></div><div class="abs" style="left:1225.82px;top:264.80px;width:9.72px;height:1.8px;background:#9cdcfe;opacity:0.3"></div><div class="abs" style="left:1237.70px;top:264.80px;width:1.08px;height:1.8px;background:#d4d4d4;opacity:0.3"></div><div class="abs" style="left:1239.86px;top:264.80px;width:1.08px;height:1.8px;background:#b5cea8;opacity:0.3"></div><div class="abs" style="left:1240.94px;top:264.80px;width:1.08px;height:1.8px;background:#d4d4d4;opacity:0.3"></div><div class="abs" style="left:1220.42px;top:268.80px;width:22.68px;height:1.8px;background:#569cd6;opacity:0.3"></div><div class="abs" style="left:1243.10px;top:268.80px;width:1.08px;height:1.8px;background:#d4d4d4;opacity:0.3"></div><div class="abs" style="left:1244.18px;top:268.80px;width:9.72px;height:1.8px;background:#9cdcfe;opacity:0.3"></div><div class="abs" style="left:1253.90px;top:268.80px;width:2.16px;height:1.8px;background:#d4d4d4;opacity:0.3"></div><div class="abs" style="left:1256.06px;top:268.80px;width:10.80px;height:1.8px;background:#9cdcfe;opacity:0.3"></div><div class="abs" style="left:1266.86px;top:268.80px;width:2.16px;height:1.8px;background:#d4d4d4;opacity:0.3"></div><div class="abs" style="left:1269.02px;top:268.80px;width:10.80px;height:1.8px;background:#9cdcfe;opacity:0.3"></div><div class="abs" style="left:1279.82px;top:268.80px;width:2.16px;height:1.8px;background:#d4d4d4;opacity:0.3"></div><div class="abs" style="left:1281.98px;top:268.80px;width:8.64px;height:1.8px;background:#9cdcfe;opacity:0.3"></div><div class="abs" style="left:1290.62px;top:268.80px;width:2.16px;height:1.8px;background:#d4d4d4;opacity:0.3"></div><div class="abs" style="left:1292.78px;top:268.80px;width:10.80px;height:1.8px;background:#9cdcfe;opacity:0.3"></div><div class="abs" style="left:1303.58px;top:268.80px;width:2.16px;height:1.8px;background:#d4d4d4;opacity:0.3"></div><div class="abs" style="left:1305.74px;top:268.80px;width:9.72px;height:1.8px;background:#9cdcfe;opacity:0.3"></div><div class="abs" style="left:1315.46px;top:268.80px;width:2.16px;height:1.8px;background:#d4d4d4;opacity:0.3"></div><div class="abs" style="left:1220.42px;top:270.80px;width:28.08px;height:1.8px;background:#569cd6;opacity:0.3"></div><div class="abs" style="left:1248.50px;top:270.80px;width:1.08px;height:1.8px;background:#d4d4d4;opacity:0.3"></div><div class="abs" style="left:1249.58px;top:270.80px;width:2.16px;height:1.8px;background:#9cdcfe;opacity:0.3"></div><div class="abs" style="left:1251.74px;top:270.80px;width:1.08px;height:1.8px;background:#d4d4d4;opacity:0.3"></div><div class="abs" style="left:1252.82px;top:270.80px;width:14.04px;height:1.8px;background:#9cdcfe;opacity:0.3"></div><div class="abs" style="left:1266.86px;top:270.80px;width:2.16px;height:1.8px;background:#d4d4d4;opacity:0.3"></div><div class="abs" style="left:1269.02px;top:270.80px;width:2.16px;height:1.8px;background:#9cdcfe;opacity:0.3"></div><div class="abs" style="left:1271.18px;top:270.80px;width:1.08px;height:1.8px;background:#d4d4d4;opacity:0.3"></div><div class="abs" style="left:1272.26px;top:270.80px;width:8.64px;height:1.8px;background:#9cdcfe;opacity:0.3"></div><div class="abs" style="left:1280.90px;top:270.80px;width:2.16px;height:1.8px;background:#d4d4d4;opacity:0.3"></div><div class="abs" style="left:1216.10px;top:272.80px;width:1.08px;height:1.8px;background:#d4d4d4;opacity:0.3"></div>
<div class="t" style="left:53.21px;top:11.72px;font-size:15.5px;line-height:15.5px;color:#cccccc;transform:scaleX(0.9891);">File</div>
<div class="t" style="left:96.98px;top:11.72px;font-size:15.5px;line-height:15.5px;color:#cccccc;transform:scaleX(1.0226);">Edit</div>
<div class="t" style="left:145.00px;top:11.72px;font-size:15.5px;line-height:15.5px;color:#cccccc;transform:scaleX(1.0294);">Selection</div>
<div class="t" style="left:230.00px;top:11.72px;font-size:15.5px;line-height:15.5px;color:#cccccc;transform:scaleX(1.0023);">View</div>
<div class="t" style="left:285.00px;top:11.72px;font-size:15.5px;line-height:15.5px;color:#cccccc;transform:scaleX(1.0072);">Go</div>
<div class="t" style="left:324.17px;top:11.72px;font-size:15.5px;line-height:15.5px;color:#cccccc;transform:scaleX(1.0293);">Run</div>
<div class="t" style="left:373.50px;top:11.72px;font-size:15.5px;line-height:15.5px;color:#cccccc;transform:scaleX(1.0701);">Terminal</div>
<div class="t" style="left:455.34px;top:11.72px;font-size:15.5px;line-height:15.5px;color:#cccccc;transform:scaleX(1.0642);">Help</div>
<div class="t" style="left:612.93px;top:10.85px;font-size:15px;line-height:15px;color:#cccccc;transform:scaleX(0.9717);">RichardBurnsRally-HS-203.cpp - ScriptsDev - Visual Studio Code</div>
<div class="t" style="left:99.62px;top:53.40px;font-size:16px;line-height:16px;color:#ffffff;transform:scaleX(0.9760);">RichardBurnsRally-HS-203.cpp</div>
<div class="t" style="left:79.52px;top:88.10px;font-size:16px;line-height:16px;color:#a9a9a9;transform:scaleX(1.0765);">m:</div>
<div class="t" style="left:117.40px;top:88.10px;font-size:16px;line-height:16px;color:#a9a9a9;transform:scaleX(0.9911);">Work</div>
<div class="t" style="left:175.40px;top:88.10px;font-size:16px;line-height:16px;color:#a9a9a9;transform:scaleX(0.9857);">code</div>
<div class="t" style="left:230.47px;top:88.10px;font-size:16px;line-height:16px;color:#a9a9a9;transform:scaleX(1.0341);">main</div>
<div class="t" style="left:286.80px;top:88.10px;font-size:16px;line-height:16px;color:#a9a9a9;transform:scaleX(1.0035);">Control</div>
<div class="t" style="left:359.31px;top:88.10px;font-size:16px;line-height:16px;color:#a9a9a9;transform:scaleX(0.9933);">Manager</div>
<div class="t" style="left:443.40px;top:88.10px;font-size:16px;line-height:16px;color:#a9a9a9;transform:scaleX(0.9756);">scripts</div>
<div class="t" style="left:536.13px;top:88.10px;font-size:16px;line-height:16px;color:#a9a9a9;transform:scaleX(0.9746);">RichardBurnsRally-HS-203.cpp</div>
<div class="t" style="left:801.90px;top:88.10px;font-size:16px;line-height:16px;color:#a9a9a9;transform:scaleX(0.9724);">setup(MSSA::Context &amp;, MSSA::System &amp;)</div>
<div class="t" style="left:40.60px;top:1116.25px;font-size:15px;line-height:15px;color:#ffffff;transform:scaleX(0.9619);">fspm_all_scripts_ported_to_cpp*</div>
<div class="t" style="left:330.20px;top:1116.25px;font-size:15px;line-height:15px;color:#ffffff;transform:scaleX(0.9125);">0</div>
<div class="t" style="left:363.96px;top:1116.25px;font-size:15px;line-height:15px;color:#ffffff;transform:scaleX(0.7429);">1</div>
<div class="t" style="left:923.15px;top:1116.25px;font-size:15px;line-height:15px;color:#ffffff;transform:scaleX(0.9542);">Ln 68, Col 2</div>
<div class="t" style="left:1020.60px;top:1116.25px;font-size:15px;line-height:15px;color:#ffffff;transform:scaleX(0.9165);">Tab Size: 4</div>
<div class="t" style="left:1108.86px;top:1116.25px;font-size:15px;line-height:15px;color:#ffffff;transform:scaleX(0.9380);">UTF-8</div>
<div class="t" style="left:1168.30px;top:1116.25px;font-size:15px;line-height:15px;color:#ffffff;transform:scaleX(0.8280);">CRLF</div>
<div class="t" style="left:1221.10px;top:1116.25px;font-size:15px;line-height:15px;color:#ffffff;transform:scaleX(0.9933);">C++</div>
<div class="abs" style="left:54.2px;top:26.2px;width:8px;height:1.25px;background:#cccccc"></div><div class="abs" style="left:98.0px;top:26.2px;width:8.5px;height:1.25px;background:#cccccc"></div><div class="abs" style="left:145.0px;top:26.2px;width:8.5px;height:1.25px;background:#cccccc"></div><div class="abs" style="left:230.0px;top:26.2px;width:10px;height:1.25px;background:#cccccc"></div><div class="abs" style="left:285.0px;top:26.2px;width:11.5px;height:1.25px;background:#cccccc"></div><div class="abs" style="left:325.2px;top:26.2px;width:9.5px;height:1.25px;background:#cccccc"></div><div class="abs" style="left:373.5px;top:26.2px;width:9px;height:1.25px;background:#cccccc"></div><div class="abs" style="left:456.4px;top:26.2px;width:9.5px;height:1.25px;background:#cccccc"></div>
<svg class="abs" style="left:12px;top:8.75px" width="20" height="20" viewBox="0 0 100 100"><path fill="#1f9cf0" fill-rule="evenodd" d="M75 0.9L96.5 10.8Q100 12.5 100 16.4V83.6Q100 87.5 96.5 89.2L75 99.1Q71.5 100.5 68.8 97.9L29.4 62L12.2 75Q9.5 77 6.9 74.8L1.4 69.7Q-0.5 67 1.4 63.6L16.2 50L1.4 36.4Q-0.5 33 1.4 30.3L6.9 25.2Q9.5 23 12.2 25L29.4 38L68.8 2.1Q71.5 -0.5 75 0.9ZM75 27.3L45.1 50L75 72.7Z"/><path fill="#0a6fc0" opacity="0.55" d="M68.8 2.1L29.4 38L12.2 25Q9.5 23 6.9 25.2L1.4 30.3Q-0.5 33 1.4 36.4L16.2 50L29.4 62L45.1 50L75 27.3V0.9Q71.5 -0.5 68.8 2.1Z"/></svg><div class="abs" style="left:1193.5px;top:18px;width:16.5px;height:1.25px;background:#cccccc"></div><div class="abs" style="left:1252.2px;top:11.8px;width:12.6px;height:11.6px;border:1.25px solid #cccccc"></div><svg class="abs" style="left:1308px;top:10.5px" width="16" height="15" viewBox="0 0 16 15"><path d="M1 1L15 14M15 1L1 14" stroke="#cccccc" stroke-width="1.3" fill="none"/></svg><svg class="abs" style="left:76px;top:48.5px" width="16" height="20" viewBox="0 0 16 20"><path d="M1.6 1.6H9.8L14.4 6.2V17.8H1.6Z M9.6 1.6V6.4H14.4" fill="none" stroke="#c5c5c5" stroke-width="1.3" stroke-linejoin="round"/></svg><svg class="abs" style="left:326px;top:53px" width="14" height="13" viewBox="0 0 14 13"><path d="M1 1L12.5 11.5M12.5 1L1 11.5" stroke="#ffffff" stroke-width="1.3" fill="none"/></svg><svg class="abs" style="left:1222px;top:48.5px" width="21" height="21" viewBox="0 0 21 21"><g fill="none" stroke="#c5c5c5" stroke-width="1.4"><circle cx="5" cy="4.3" r="2.3"/><circle cx="16" cy="17" r="2.3"/><path d="M5 6.6V14.5q0 2.5 2.5 2.5H12.5"/><path d="M10.5 15L12.7 17L10.5 19"/><path d="M16 14.7V6.8q0-2.5-2.5-2.5H8.5"/><path d="M10.5 2.3L8.3 4.3L10.5 6.3"/></g></svg><svg class="abs" style="left:1264px;top:49px" width="18" height="18" viewBox="0 0 18 18"><g fill="none" stroke="#c5c5c5" stroke-width="1.4"><rect x="1.2" y="1.2" width="15.6" height="15.3" rx="1"/><path d="M9 1.2V16.5"/></g></svg><div class="abs" style="left:1304.35px;top:57.6px;width:2.6px;height:2.6px;border-radius:50%;background:#c5c5c5"></div><div class="abs" style="left:1311.05px;top:57.6px;width:2.6px;height:2.6px;border-radius:50%;background:#c5c5c5"></div><div class="abs" style="left:1317.75px;top:57.6px;width:2.6px;height:2.6px;border-radius:50%;background:#c5c5c5"></div><svg class="abs" style="left:104.2px;top:88.5px" width="7" height="13" viewBox="0 0 7 13"><path d="M0.7 0.7L5.2 6.3L0.7 11.9" fill="none" stroke="#a9a9a9" stroke-width="1.3"/></svg><svg class="abs" style="left:161.6px;top:88.5px" width="7" height="13" viewBox="0 0 7 13"><path d="M0.7 0.7L5.2 6.3L0.7 11.9" fill="none" stroke="#a9a9a9" stroke-width="1.3"/></svg><svg class="abs" style="left:216.8px;top:88.5px" width="7" height="13" viewBox="0 0 7 13"><path d="M0.7 0.7L5.2 6.3L0.7 11.9" fill="none" stroke="#a9a9a9" stroke-width="1.3"/></svg><svg class="abs" style="left:271.8px;top:88.5px" width="7" height="13" viewBox="0 0 7 13"><path d="M0.7 0.7L5.2 6.3L0.7 11.9" fill="none" stroke="#a9a9a9" stroke-width="1.3"/></svg><svg class="abs" style="left:345.6px;top:88.5px" width="7" height="13" viewBox="0 0 7 13"><path d="M0.7 0.7L5.2 6.3L0.7 11.9" fill="none" stroke="#a9a9a9" stroke-width="1.3"/></svg><svg class="abs" style="left:429.7px;top:88.5px" width="7" height="13" viewBox="0 0 7 13"><path d="M0.7 0.7L5.2 6.3L0.7 11.9" fill="none" stroke="#a9a9a9" stroke-width="1.3"/></svg><svg class="abs" style="left:495.5px;top:88.5px" width="7" height="13" viewBox="0 0 7 13"><path d="M0.7 0.7L5.2 6.3L0.7 11.9" fill="none" stroke="#a9a9a9" stroke-width="1.3"/></svg><svg class="abs" style="left:760.3px;top:88.5px" width="7" height="13" viewBox="0 0 7 13"><path d="M0.7 0.7L5.2 6.3L0.7 11.9" fill="none" stroke="#a9a9a9" stroke-width="1.3"/></svg><svg class="abs" style="left:511.5px;top:86.2px" width="16" height="18" viewBox="0 0 16 18"><path d="M1.4 1.3H9.4L14.6 6.4V16.7H1.4Z M9.2 1.3V6.6H14.6" fill="none" stroke="#a9a9a9" stroke-width="1.3" stroke-linejoin="round"/></svg><svg class="abs" style="left:776px;top:86.5px" width="17" height="18" viewBox="0 0 17 18"><g fill="none" stroke="#b180d7" stroke-width="1.4" stroke-linejoin="round"><path d="M8.5 1.2L15.8 5V13L8.5 16.8L1.2 13V5Z"/><path d="M1.2 5L8.5 8.8L15.8 5M8.5 8.8V16.8"/></g></svg><svg class="abs" style="left:14px;top:51px" width="32" height="34" viewBox="0 0 32 34"><g fill="none" stroke="#858585" stroke-width="1.9" stroke-linejoin="round"><path d="M9.2 8.5H3.5Q2.5 8.5 2.5 9.5V30.5Q2.5 31.5 3.5 31.5H19Q20 31.5 20 30.5V25"/><path d="M11 2.5H23.5L29 8V23.5Q29 24.5 28 24.5H11Q10 24.5 10 23.5V3.5Q10 2.5 11 2.5Z"/><path d="M23 2.5V8.5H29"/></g></svg><svg class="abs" style="left:14px;top:112px" width="34" height="38" viewBox="0 0 34 38"><g fill="none" stroke="#858585" stroke-width="1.9"><circle cx="20" cy="16.3" r="9.6"/><path d="M13.2 23.1L3 34.5"/></g></svg><svg class="abs" style="left:14px;top:178px" width="30" height="36" viewBox="0 0 30 36"><g fill="none" stroke="#858585" stroke-width="1.9"><circle cx="9.2" cy="9.4" r="3.6"/><circle cx="22.4" cy="14.7" r="3.6"/><circle cx="9.2" cy="30" r="3.6"/><path d="M9.2 13V26.4"/><path d="M22.4 18.3Q22.4 22 17 22.5Q10.5 23 9.2 26.4"/></g></svg><div class="abs" style="left:29.6px;top:198.2px;width:20px;height:20px;border-radius:50%;background:#007acc;color:#fff;font-family:'Liberation Sans';font-weight:bold;font-size:11px;line-height:20.5px;text-align:center;letter-spacing:-0.4px">10</div><svg class="abs" style="left:12px;top:246px" width="36" height="34" viewBox="0 0 36 34"><g fill="none" stroke="#858585" stroke-width="1.9" stroke-linejoin="round"><path d="M12.8 17V2.5L33 14.8L18.5 23.3"/><ellipse cx="10.7" cy="24.5" rx="5.2" ry="6.5"/><path d="M5.5 22H2.5M5.5 27H2.5M16 22H19M16 27H19M7 18.5L5 16.5M14.5 18.5L16.5 16.5M7.5 30.5L5.5 32.5M14 30.5L16 32.5M5.6 22.5H15.8"/></g></svg><svg class="abs" style="left:14px;top:312px" width="32" height="32" viewBox="0 0 32 32"><g fill="none" stroke="#858585" stroke-width="1.9" stroke-linejoin="round"><path d="M2.5 8H13V18.5H23.5V29.5H2.5Z M2.5 18.5H13V29.5"/><rect x="18.5" y="2" width="11.5" height="11.5" rx="1.5"/></g></svg><svg class="abs" style="left:19px;top:377px" width="22" height="32" viewBox="0 0 22 32"><g fill="none" stroke="#858585" stroke-width="1.9"><rect x="1.6" y="1.6" width="18.2" height="29" /><path d="M1.6 21H19.8"/><rect x="5.2" y="4.6" width="4" height="4"/></g></svg><svg class="abs" style="left:14px;top:994px" width="32" height="32" viewBox="0 0 32 32"><g fill="none" stroke="#858585" stroke-width="1.9"><circle cx="16" cy="16" r="14.3"/><circle cx="16" cy="12.2" r="5.3"/><path d="M6.5 26.8Q9 19.5 16 19.5Q23 19.5 25.5 26.8"/></g></svg><svg class="abs" style="left:14.07px;top:1058.8px" width="32" height="32" viewBox="0 0 32 32"><g fill="none" stroke="#858585" stroke-width="1.9" stroke-linejoin="round"><polygon points="30.24,13.85 30.24,18.15 24.50,18.63 23.87,20.15 27.59,24.55 24.55,27.59 20.15,23.87 18.63,24.50 18.15,30.24 13.85,30.24 13.37,24.50 11.85,23.87 7.45,27.59 4.41,24.55 8.13,20.15 7.50,18.63 1.76,18.15 1.76,13.85 7.50,13.37 8.13,11.85 4.41,7.45 7.45,4.41 11.85,8.13 13.37,7.50 13.85,1.76 18.15,1.76 18.63,7.50 20.15,8.13 24.55,4.41 27.59,7.45 23.87,11.85 24.50,13.37"/><circle cx="16" cy="16" r="4.2"/></g></svg><svg class="abs" style="left:18px;top:1111px" width="18" height="22" viewBox="0 0 18 22"><g fill="none" stroke="#fff" stroke-width="1.3"><circle cx="5.8" cy="5.6" r="2.3"/><circle cx="13.4" cy="8.9" r="2.3"/><circle cx="5.6" cy="18.2" r="2.3"/><path d="M5.8 7.9V15.9M13.4 11.2Q13.4 13.5 10 13.6Q6.5 13.8 5.8 15.9"/></g></svg><svg class="abs" style="left:271px;top:1114px" width="18" height="18" viewBox="0 0 18 18"><g fill="none" stroke="#fff" stroke-width="1.3" stroke-linejoin="round"><path d="M5.5 13H4.5Q1.2 13 1.2 9.8Q1.2 6.8 4.3 6.6Q5 2.6 9 2.6Q12.8 2.6 13.6 6.4Q16.6 6.7 16.6 9.8Q16.6 13 13.5 13H12.5"/><path d="M9 16V7.8M6.5 10.3L9 7.8L11.5 10.3"/></g></svg><svg class="abs" style="left:308px;top:1114px" width="18" height="18" viewBox="0 0 18 18"><g fill="none" stroke="#fff" stroke-width="1.3"><circle cx="9" cy="9" r="7.4"/><path d="M6 6L12 12M12 6L6 12"/></g></svg><svg class="abs" style="left:342px;top:1114px" width="18" height="17" viewBox="0 0 18 17"><g fill="none" stroke="#fff" stroke-width="1.3" stroke-linejoin="round"><path d="M9 1.5L16.5 15.3H1.5Z"/><path d="M9 6V11M9 12.3V13.7"/></g></svg><svg class="abs" style="left:1271px;top:1113px" width="18" height="19" viewBox="0 0 18 19"><g fill="none" stroke="#fff" stroke-width="1.3"><circle cx="6.8" cy="9" r="3"/><path d="M1.5 17.8Q2.5 13 6.8 13Q11 13 12 17.8"/><path d="M5.3 3.3V2.2H16.8V8.4H12.5L10 11V8.4"/></g></svg><svg class="abs" style="left:1309px;top:1113px" width="18" height="19" viewBox="0 0 18 19"><g fill="none" stroke="#fff" stroke-width="1.3" stroke-linejoin="round"><path d="M3 14.5V8.2Q3 2 9 2Q15 2 15 8.2V14.5L16.3 15.8H1.7Z"/><path d="M7 16.5Q9 19 11 16.5"/></g></svg>
</body></html>
